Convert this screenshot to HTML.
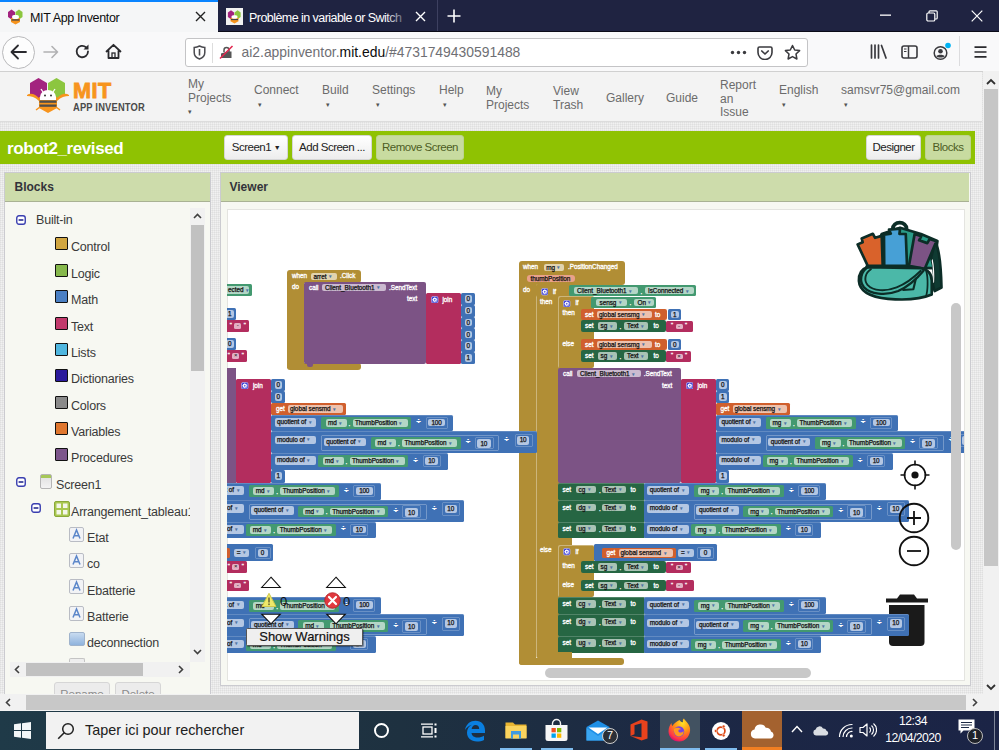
<!DOCTYPE html>
<html><head><meta charset="utf-8">
<style>
*{box-sizing:border-box;margin:0;padding:0}
html,body{width:999px;height:750px;overflow:hidden;background:#fff;font-family:"Liberation Sans",sans-serif}
.a{position:absolute}
#root{position:absolute;left:0;top:0;width:999px;height:750px;overflow:hidden;background:#ececec}
/* browser chrome */
#tabbar{left:0;top:0;width:999px;height:32px;background:#1f2341;border-bottom:1px solid #0b0b18}
#tab1{left:0;top:0;width:218px;height:33px;background:#f5f6f7;border-top:2px solid #0a84ff}
.tabt{font-size:12.500px;letter-spacing:-0.350px;color:#0c0c0d;top:10.500px;white-space:nowrap}
#navbar{left:0;top:32px;width:999px;height:40px;background:#f9f9fa;border-bottom:1px solid #d0d0d0}
#url{left:184.500px;top:5.500px;width:623px;height:29.500px;background:#fff;border:1px solid #c4c4c6;border-radius:3px}
/* app inventor */
#page{left:0;top:72px;width:983px;height:639px;background-color:#f1f1f1;background-image:linear-gradient(90deg,rgba(0,0,0,.04) 50%,rgba(0,0,0,0) 50%),linear-gradient(rgba(0,0,0,.04) 50%,rgba(0,0,0,0) 50%);background-size:2px 2px;overflow:hidden}
#topnav{left:0;top:0;width:982px;height:50px;background:#f3f3f3;border-bottom:1px solid #dcdcdc}
.nv{font-size:12px;color:#6b6b6b;line-height:13.5px;white-space:nowrap}
.nv i{font-style:normal;font-size:7px;display:block;line-height:9px;margin-top:2px;color:#555}
#green{left:0;top:59px;width:975px;height:33px;background:#8fc202}
.btn{height:25px;border-radius:3px;font-size:11.500px;letter-spacing:-0.500px;line-height:23px;text-align:center;white-space:nowrap;top:4px;color:#222;border:1px solid #d6d6d6;background:linear-gradient(#ffffff,#ededed)}
.btn.dis{background:#c8dba0;border-color:#bdd38f;color:#4d5d24}
.panel{background:#f7f8f2;border:1px solid #cbcbd0}
.phead{left:0;top:0;height:29px;background:#cddcab;border-bottom:1px solid #a9b294;font-weight:bold;font-size:12px;color:#33333a;line-height:29px;padding-left:10px}
.ti{font-size:12.500px;letter-spacing:-0.200px;color:#3a3a3a;white-space:nowrap;line-height:14px}
.sw{width:13px;height:13px;border:1.5px solid #111;border-radius:1px}

#wsc{left:227px;top:209px;width:737px;height:471px;overflow:hidden}
.b{position:absolute}
.t{position:absolute;white-space:nowrap;line-height:8px;letter-spacing:-0.050px;-webkit-text-stroke:0.300px #fff}
.d{position:absolute;white-space:nowrap;font-size:6.400px;color:#111;border-radius:2px;letter-spacing:-0.050px;-webkit-text-stroke:0.250px #111}
.d i{font-style:normal;font-size:4.600px;color:#4d74a6;-webkit-text-stroke:0.200px #4d74a6;margin-left:2.500px;position:relative;top:-0.500px}
.n{position:absolute;background:#b4c7e3;border-radius:2px;font-size:6.400px;color:#111;text-align:center;white-space:nowrap;letter-spacing:-0.200px;-webkit-text-stroke:0.250px #111}
.g{position:absolute;background:#3c3fd4;border:0.800px solid #c9cdf5;border-radius:1.500px}
.g:after{content:"";position:absolute;left:1.300px;top:1.300px;width:2.300px;height:2.300px;border-radius:50%;border:0.800px solid #fff}
/* taskbar */
#task{left:0;top:710px;width:999px;height:40px;background:linear-gradient(90deg,#1f3a48 0,#1e3140 40%,#1c2745 75%,#1b2446 100%)}
</style></head><body>
<div id="root">

<!-- ===== TAB BAR ===== -->
<div id="tabbar" class="a">
  <div id="tab1" class="a"></div>
  <svg class="a" style="left:7px;top:8px" width="17" height="17" viewBox="0 0 17 17"><polygon points="1,4 4.5,1.5 8,4 8,9 4.5,11.5 1,9" fill="#a3237f"/><polygon points="8.5,4 12,1.5 15.5,4 15.5,9 12,11.5 8.5,9" fill="#8cc63f"/><polygon points="4,10 13,10 13,14 8.5,16.5 4,14" fill="#f7941d"/><rect x="5" y="7" width="7" height="4" rx="2" fill="#fff"/><rect x="4.5" y="11.3" width="8" height="1.3" fill="#444"/></svg>
  <div class="a tabt" style="left:30px">MIT App Inventor</div>
  <svg class="a" style="left:195px;top:11px" width="11" height="11" viewBox="0 0 11 11"><path d="M1 1L10 10M10 1L1 10" stroke="#222" stroke-width="1.4" fill="none"/></svg>
  <div class="a" style="left:226px;top:8px;width:17px;height:17px;background:#f1f1f1"></div>
  <svg class="a" style="left:227px;top:9px" width="15" height="15" viewBox="0 0 17 17"><polygon points="1,4 4.5,1.5 8,4 8,9 4.5,11.5 1,9" fill="#a3237f"/><polygon points="8.5,4 12,1.5 15.5,4 15.5,9 12,11.5 8.5,9" fill="#8cc63f"/><polygon points="4,10 13,10 13,14 8.5,16.5 4,14" fill="#f7941d"/><rect x="5" y="7" width="7" height="4" rx="2" fill="#fff"/><rect x="4.5" y="11.3" width="8" height="1.3" fill="#444"/></svg>
  <div class="a tabt" style="left:249px;color:#fff;width:158px;overflow:hidden;letter-spacing:-0.550px">Problème in variable or Switch</div>
  <div class="a" style="left:385px;top:6px;width:22px;height:22px;background:linear-gradient(90deg,rgba(31,35,65,0),rgba(31,35,65,.85))"></div>
  <svg class="a" style="left:415px;top:11px" width="11" height="11" viewBox="0 0 11 11"><path d="M1 1L10 10M10 1L1 10" stroke="#fff" stroke-width="1.4" fill="none"/></svg>
  <div class="a" style="left:437px;top:0;width:1px;height:31px;background:#3d4060"></div>
  <svg class="a" style="left:447px;top:9px" width="14" height="14" viewBox="0 0 14 14"><path d="M7 0.5V13.5M0.5 7H13.5" stroke="#fff" stroke-width="1.6" fill="none"/></svg>
  <svg class="a" style="left:880px;top:14px" width="12" height="3"><rect width="11" height="1.3" y="0.5" fill="#fff"/></svg>
  <svg class="a" style="left:926px;top:10px" width="12" height="12" viewBox="0 0 12 12"><rect x="0.8" y="3" width="8" height="8" rx="1.3" fill="none" stroke="#fff" stroke-width="1.2"/><path d="M3 3V1.8a1 1 0 0 1 1-1H10.2a1 1 0 0 1 1 1V8a1 1 0 0 1-1 1H9" fill="none" stroke="#fff" stroke-width="1.2"/></svg>
  <svg class="a" style="left:971px;top:10px" width="12" height="12" viewBox="0 0 12 12"><path d="M0.7 0.7L11.3 11.3M11.3 0.7L0.7 11.3" stroke="#fff" stroke-width="1.2" fill="none"/></svg>
</div>

<!-- ===== NAV BAR ===== -->
<div id="navbar" class="a">
  <div class="a" style="left:2px;top:3.500px;width:33px;height:33px;border-radius:50%;border:1px solid #b9b9bb;background:#fdfdfd"></div>
  <svg class="a" style="left:10px;top:12px" width="17" height="16" viewBox="0 0 17 16"><path d="M16 8H2M8 1.5L1.5 8L8 14.5" fill="none" stroke="#2a2a2e" stroke-width="1.8" stroke-linecap="round" stroke-linejoin="round"/></svg>
  <svg class="a" style="left:43px;top:13px" width="16" height="14" viewBox="0 0 16 14"><path d="M1 7H14.5M9 1.5L14.5 7L9 12.5" fill="none" stroke="#b1b1b3" stroke-width="1.6" stroke-linecap="round" stroke-linejoin="round"/></svg>
  <svg class="a" style="left:74px;top:11px" width="17" height="17" viewBox="0 0 17 17"><path d="M14 8.5A5.7 5.7 0 1 1 12 4.2" fill="none" stroke="#2a2a2e" stroke-width="1.8" stroke-linecap="round"/><path d="M14.5 1.5V6.5H9.5Z" fill="#2a2a2e"/></svg>
  <svg class="a" style="left:105px;top:11px" width="17" height="17" viewBox="0 0 17 17"><path d="M1.5 8.5L8.5 1.8L15.5 8.5M3.5 7.5V15H13.5V7.5" fill="none" stroke="#2a2a2e" stroke-width="1.8" stroke-linecap="round" stroke-linejoin="round"/><rect x="7" y="10" width="3" height="5" fill="none" stroke="#2a2a2e" stroke-width="1.3"/></svg>
  <div id="url" class="a">
    <svg class="a" style="left:7px;top:6px" width="13" height="15" viewBox="0 0 13 15"><path d="M6.5 1C4.5 2 2.8 2.3 1.2 2.4V7.5C1.2 10.5 3.5 13 6.5 14C9.5 13 11.8 10.5 11.8 7.5V2.4C10.2 2.3 8.500 2 6.5 1Z" fill="none" stroke="#4a4a4f" stroke-width="1.5"/><path d="M6.5 4V10.500" stroke="#4a4a4f" stroke-width="1.6"/></svg>
    <div class="a" style="left:26px;top:4px;width:1px;height:20px;background:#ddd"></div>
    <svg class="a" style="left:33px;top:6px" width="15" height="15" viewBox="0 0 15 15"><path d="M2 13V8.5L8 6.500H12.500V13Z" fill="#555"/><path d="M5 7V5a2.500 2.500 0 0 1 5 0V7" fill="none" stroke="#555" stroke-width="1.500"/><path d="M1 13.500L13.500 1" stroke="#e22850" stroke-width="1.6"/></svg>
    <div class="a" style="left:56px;top:5px;font-size:13.9px;color:#6f6f74;white-space:nowrap;letter-spacing:0">ai2.appinventor.<span style="color:#0c0c0d">mit.edu</span>/#4731749430591488</div>
    <svg class="a" style="left:544px;top:11px" width="18" height="5" viewBox="0 0 18 5"><circle cx="2.500" cy="2.500" r="1.700" fill="#3a3a3e"/><circle cx="8.500" cy="2.500" r="1.700" fill="#3a3a3e"/><circle cx="14.500" cy="2.500" r="1.700" fill="#3a3a3e"/></svg>
    <svg class="a" style="left:571px;top:7px" width="16" height="14" viewBox="0 0 16 14"><path d="M2.500 1H13.500A1.500 1.500 0 0 1 15 2.500V6.500A7 7 0 0 1 1 6.500V2.500A1.500 1.500 0 0 1 2.500 1Z" fill="none" stroke="#3a3a3e" stroke-width="1.600"/><path d="M4.800 5L8 8L11.200 5" fill="none" stroke="#3a3a3e" stroke-width="1.700" stroke-linecap="round" stroke-linejoin="round"/></svg>
    <svg class="a" style="left:598px;top:5px" width="17" height="17" viewBox="0 0 17 17"><path d="M8.500 1.500L10.700 6L15.600 6.600L12 10L12.900 15L8.500 12.600L4.100 15L5 10L1.400 6.600L6.300 6Z" fill="none" stroke="#3a3a3e" stroke-width="1.500" stroke-linejoin="round"/></svg>
  </div>
  <svg class="a" style="left:870px;top:12px" width="18" height="15" viewBox="0 0 18 15"><path d="M1.500 1V14M5 1V14M8.500 1V14M11.500 1.500L16 14" stroke="#3a3a3e" stroke-width="1.700" fill="none" stroke-linecap="round"/></svg>
  <svg class="a" style="left:901px;top:13px" width="17" height="14" viewBox="0 0 17 14"><rect x="1" y="1" width="15" height="12" rx="2" fill="none" stroke="#3a3a3e" stroke-width="1.600"/><path d="M7.500 1V13" stroke="#3a3a3e" stroke-width="1.500"/><path d="M3 4H5.500M3 6.500H5.500" stroke="#3a3a3e" stroke-width="1"/></svg>
  <svg class="a" style="left:932px;top:10px" width="20" height="20" viewBox="0 0 20 20"><circle cx="8.500" cy="11" r="6.300" fill="none" stroke="#3a3a3e" stroke-width="1.500"/><circle cx="8.500" cy="9.300" r="2.300" fill="#3a3a3e"/><path d="M4.300 14.300C5.500 12.300 11.500 12.300 12.700 14.300C11.500 16 5.500 16 4.300 14.300Z" fill="#3a3a3e"/><circle cx="16" cy="3.500" r="2.800" fill="#00b3f4"/></svg>
  <div class="a" style="left:959px;top:4px;width:1px;height:30px;background:#dcdcde"></div>
  <svg class="a" style="left:974px;top:14px" width="13" height="12" viewBox="0 0 13 12"><path d="M0.500 1.200H12.500M0.500 6H12.500M0.500 10.800H12.500" stroke="#2a2a2e" stroke-width="1.700"/></svg>
</div>

<!-- ===== PAGE ===== -->
<div id="page" class="a">
  <div id="topnav" class="a">
    <!-- logo -->
    <svg class="a" style="left:26px;top:3px" width="46" height="40" viewBox="0 0 46 40">
      <polygon points="4,8 12.500,3 21,8 21,19 12.500,24 4,19" fill="#a3237f"/>
      <polygon points="22,8 30.500,3 39,8 39,19 30.500,24 22,19" fill="#8cc63f"/>
      <path d="M1 20C5 17 10 20 13 23L13 26C9 22 5 21 1 21Z" fill="#f7941d"/>
      <path d="M43 20C39 17 34 20 31 23L31 26C35 22 39 21 43 21Z" fill="#f7941d"/>
      <path d="M13 22H31V33L22 38L13 33Z" fill="#f7941d"/>
      <path d="M14 22A8 7 0 0 1 30 22V25H14Z" fill="#fff"/>
      <rect x="13.500" y="25.500" width="17" height="2.300" fill="#4d4d4d"/><rect x="13.500" y="29.500" width="17" height="2.300" fill="#4d4d4d"/>
      <circle cx="19" cy="20.500" r="1" fill="#333"/><circle cx="25" cy="20.500" r="1" fill="#333"/>
      <path d="M17 17L15 14M27 17L29 14" stroke="#fff" stroke-width="1.300"/>
      <path d="M10 35L14 32M34 35L30 32" stroke="#f7941d" stroke-width="1.500"/>
    </svg>
    <div class="a" style="left:73px;top:8px;font-size:22.500px;font-weight:bold;color:#f7941d;-webkit-text-stroke:0.900px #f7941d;letter-spacing:0.500px;line-height:22px;transform:scaleX(0.960);transform-origin:0 0">MIT</div>
    <div class="a" style="left:73px;top:30px;font-size:10.500px;font-weight:bold;color:#4a4a4a;letter-spacing:0.200px;line-height:11px;white-space:nowrap;transform:scaleX(0.890);transform-origin:0 0">APP INVENTOR</div>
    <div class="a nv" style="left:188px;top:6px">My<br>Projects<i>&#9662;</i></div>
    <div class="a nv" style="left:254px;top:12px">Connect<i style="margin-left:4px;margin-top:2.500px">&#9662;</i></div>
    <div class="a nv" style="left:322px;top:12px">Build<i style="margin-left:4px;margin-top:2.500px">&#9662;</i></div>
    <div class="a nv" style="left:372px;top:12px">Settings<i style="margin-left:4px;margin-top:2.500px">&#9662;</i></div>
    <div class="a nv" style="left:439px;top:12px">Help<i style="margin-left:4px;margin-top:2.500px">&#9662;</i></div>
    <div class="a nv" style="left:486px;top:13px">My<br>Projects</div>
    <div class="a nv" style="left:553px;top:13px">View<br>Trash</div>
    <div class="a nv" style="left:606px;top:20px">Gallery</div>
    <div class="a nv" style="left:666px;top:20px">Guide</div>
    <div class="a nv" style="left:720px;top:7px">Report<br>an<br>Issue</div>
    <div class="a nv" style="left:779px;top:12px">English<i style="margin-left:3px;margin-top:2.500px">&#9662;</i></div>
    <div class="a nv" style="left:841px;top:12px">samsvr75@gmail.com<i style="margin-left:3px;margin-top:2.500px">&#9662;</i></div>
  </div>
  <div id="green" class="a">
    <div class="a" style="left:7px;top:7.500px;font-size:17px;font-weight:bold;color:#fff;letter-spacing:-0.400px;line-height:20px;white-space:nowrap">robot2_revised</div>
    <div class="a btn" style="left:224px;width:64px">Screen1 <span style="font-size:7px;position:relative;top:-1px">&#9660;</span></div>
    <div class="a btn" style="left:292px;width:80px">Add Screen ...</div>
    <div class="a btn dis" style="left:376px;width:88px">Remove Screen</div>
    <div class="a btn" style="left:866px;width:55px">Designer</div>
    <div class="a btn dis" style="left:925px;width:46px">Blocks</div>
  </div>

  <!-- Blocks panel -->
  <div id="bp" class="a panel" style="left:3.500px;top:100px;width:207.500px;height:540px;overflow:hidden">
    <div class="a phead" style="width:206px">Blocks</div>
  </div>
  <!-- Viewer panel -->
  <div id="vp" class="a panel" style="left:220px;top:100px;width:751px;height:514px;border-width:1.500px">
    <div class="a phead" style="width:748px;padding-left:8.500px">Viewer</div>
    <div id="ws" class="a" style="left:5.500px;top:35.500px;width:738px;height:472px;background:#fff;border:1px solid #e4e4e0;overflow:hidden"></div>
  </div>

  <!-- bottom horizontal scrollbar -->
  <div class="a" style="left:0;top:624px;width:983px;height:17px;background:#f1f1f1"></div>
</div>

<!-- ===== TREE ===== -->
<div id="tree" class="a" style="left:0;top:0;width:983px;height:694px;overflow:hidden;pointer-events:none">
<svg class="a" style="left:16px;top:215px" width="10" height="10" viewBox="0 0 10 10"><rect x="0.750" y="0.750" width="8.500" height="8.500" rx="2.200" fill="#fff" stroke="#3a3fb0" stroke-width="1.400"/><rect x="2.600" y="4.200" width="4.800" height="1.600" fill="#2a2f90"/></svg>
<div class="a ti" style="left:36px;top:213px">Built-in</div>
<div class="a sw" style="left:55px;top:236.5px;background:#d1a640"></div>
<div class="a ti" style="left:71px;top:240px">Control</div>
<div class="a sw" style="left:55px;top:263.5px;background:#86b84c"></div>
<div class="a ti" style="left:71px;top:267px">Logic</div>
<div class="a sw" style="left:55px;top:289.5px;background:#4a7fc3"></div>
<div class="a ti" style="left:71px;top:293px">Math</div>
<div class="a sw" style="left:55px;top:316.5px;background:#c23a6c"></div>
<div class="a ti" style="left:71px;top:320px">Text</div>
<div class="a sw" style="left:55px;top:342.5px;background:#4fb6df"></div>
<div class="a ti" style="left:71px;top:346px">Lists</div>
<div class="a sw" style="left:55px;top:368.5px;background:#2b1a9c"></div>
<div class="a ti" style="left:71px;top:372px">Dictionaries</div>
<div class="a sw" style="left:55px;top:395.5px;background:#8a8a8a"></div>
<div class="a ti" style="left:71px;top:399px">Colors</div>
<div class="a sw" style="left:55px;top:421.5px;background:#e0772f"></div>
<div class="a ti" style="left:71px;top:425px">Variables</div>
<div class="a sw" style="left:55px;top:447.5px;background:#7d568c"></div>
<div class="a ti" style="left:71px;top:451px">Procedures</div>
<svg class="a" style="left:16px;top:477px" width="10" height="10" viewBox="0 0 10 10"><rect x="0.750" y="0.750" width="8.500" height="8.500" rx="2.200" fill="#fff" stroke="#3a3fb0" stroke-width="1.400"/><rect x="2.600" y="4.200" width="4.800" height="1.600" fill="#2a2f90"/></svg>
<div class="a" style="left:40px;top:474px;width:12px;height:15px;border:1px solid #b5b5b5;border-radius:2px;background:linear-gradient(#a6c858 0,#a6c858 3px,#e4e4e4 3px,#f3f3f3 100%)"></div>
<div class="a ti" style="left:56px;top:478px">Screen1</div>
<svg class="a" style="left:31px;top:503px" width="10" height="10" viewBox="0 0 10 10"><rect x="0.750" y="0.750" width="8.500" height="8.500" rx="2.200" fill="#fff" stroke="#3a3fb0" stroke-width="1.400"/><rect x="2.600" y="4.200" width="4.800" height="1.600" fill="#2a2f90"/></svg>
<svg class="a" style="left:54px;top:501px" width="16" height="16" viewBox="0 0 16 16"><rect x="0.500" y="0.500" width="15" height="15" rx="1.500" fill="#a9c750" stroke="#8aa83a"/><rect x="2.500" y="2.500" width="4.500" height="4.500" fill="#f4f6ea"/><rect x="9" y="2.500" width="4.500" height="4.500" fill="#f4f6ea"/><rect x="2.500" y="9" width="4.500" height="4.500" fill="#f4f6ea"/><rect x="9" y="9" width="4.500" height="4.500" fill="#f4f6ea"/></svg>
<div class="a ti" style="left:71px;top:505px">Arrangement_tableau1</div>
<svg class="a" style="left:69px;top:526.5px" width="15" height="15" viewBox="0 0 15 15"><rect x="0.500" y="0.500" width="14" height="14" rx="1.500" fill="#f2f3f6" stroke="#b9bcc4"/><path d="M4 11.500L7.500 3L11 11.500M5.300 8.700H9.700" fill="none" stroke="#5b86c9" stroke-width="1.500"/></svg>
<div class="a ti" style="left:87px;top:531px">Etat</div>
<svg class="a" style="left:69px;top:552.5px" width="15" height="15" viewBox="0 0 15 15"><rect x="0.500" y="0.500" width="14" height="14" rx="1.500" fill="#f2f3f6" stroke="#b9bcc4"/><path d="M4 11.500L7.500 3L11 11.500M5.300 8.700H9.700" fill="none" stroke="#5b86c9" stroke-width="1.500"/></svg>
<div class="a ti" style="left:87px;top:557px">co</div>
<svg class="a" style="left:69px;top:579.0px" width="15" height="15" viewBox="0 0 15 15"><rect x="0.500" y="0.500" width="14" height="14" rx="1.500" fill="#f2f3f6" stroke="#b9bcc4"/><path d="M4 11.500L7.500 3L11 11.500M5.300 8.700H9.700" fill="none" stroke="#5b86c9" stroke-width="1.500"/></svg>
<div class="a ti" style="left:87px;top:583.5px">Ebatterie</div>
<svg class="a" style="left:69px;top:605.5px" width="15" height="15" viewBox="0 0 15 15"><rect x="0.500" y="0.500" width="14" height="14" rx="1.500" fill="#f2f3f6" stroke="#b9bcc4"/><path d="M4 11.500L7.500 3L11 11.500M5.300 8.700H9.700" fill="none" stroke="#5b86c9" stroke-width="1.500"/></svg>
<div class="a ti" style="left:87px;top:610px">Batterie</div>
<div class="a" style="left:69px;top:632px;width:16px;height:14px;border:1px solid #9fb3cc;border-radius:2px;background:linear-gradient(#c8dbf0,#8fb3dd)"></div>
<div class="a ti" style="left:87px;top:636px">deconnection</div>
<div class="a" style="left:69px;top:658px;width:16px;height:6px;border:1px solid #c4c4c4;border-bottom:none;border-radius:2px 2px 0 0;background:#eee"></div>
<div class="a" style="left:190px;top:208px;width:15px;height:454px;background:#f1f1f1"></div>
<div class="a" style="left:191px;top:225px;width:13px;height:146px;background:#c1c1c1"></div>
<svg class="a" style="left:193px;top:213px" width="9" height="6" viewBox="0 0 9 6"><path d="M1 5L4.500 1.500L8 5" fill="none" stroke="#404040" stroke-width="1.600"/></svg>
<svg class="a" style="left:193px;top:649px" width="9" height="6" viewBox="0 0 9 6"><path d="M1 1L4.500 4.500L8 1" fill="none" stroke="#404040" stroke-width="1.600"/></svg>
<div class="a" style="left:10px;top:662px;width:180px;height:15px;background:#f1f1f1"></div>
<div class="a" style="left:26px;top:663px;width:117px;height:13px;background:#c1c1c1"></div>
<svg class="a" style="left:14px;top:665px" width="6" height="9" viewBox="0 0 6 9"><path d="M5 1L1.500 4.500L5 8" fill="none" stroke="#404040" stroke-width="1.600"/></svg>
<svg class="a" style="left:178px;top:665px" width="6" height="9" viewBox="0 0 6 9"><path d="M1 1L4.500 4.500L1 8" fill="none" stroke="#404040" stroke-width="1.600"/></svg>
<div class="a" style="left:54px;top:682px;width:56px;height:24px;border:1px solid #d6d6d6;border-radius:3px;background:#ececec;color:#8a8a8a;font-size:11.500px;text-align:center;line-height:22px">Rename</div>
<div class="a" style="left:115px;top:682px;width:46px;height:24px;border:1px solid #d6d6d6;border-radius:3px;background:#ececec;color:#8a8a8a;font-size:11.500px;text-align:center;line-height:22px">Delete</div>
</div>

<!-- ===== WORKSPACE ===== -->
<div id="wsc" class="a">
<!--WS-START-->
<!-- trash -->
<svg class="b" style="left:658px;top:383px" width="44" height="56" viewBox="0 0 44 56"><path d="M1 10.500V6.500H12L15 2.500H29L32 6.500H43V10.500Z" fill="#1a1a1a"/><path d="M4 13H39.500V50A4 4 0 0 1 35.500 54H8A4 4 0 0 1 4 50Z" fill="#1a1a1a"/></svg>
<div class="b" style="left:59.7px;top:61px;width:74px;height:13px;background:#b18e35;border-radius:3px;"></div>
<div class="b" style="left:59.7px;top:66px;width:17.3px;height:93px;background:#b18e35;border-radius:0px;"></div>
<div class="b" style="left:59.7px;top:154px;width:74px;height:7px;background:#b18e35;border-radius:3px;"></div>
<div class="t" style="left:65px;top:63px;color:#fff;font-size:6.4px;">when</div>
<div class="d" style="left:84px;top:63.5px;width:25.7px;height:7.5px;background:#e1d3af;line-height:7.5px;padding-left:2.5px">arret<i>&#9662;</i></div>
<div class="t" style="left:113px;top:63px;color:#fff;font-size:6.4px;">.Click</div>
<div class="t" style="left:65px;top:73.5px;color:#fff;font-size:6.4px;">do</div>
<div class="b" style="left:76.7px;top:73px;width:122.3px;height:81.7px;background:#7c5385;border-radius:2px;"></div>
<div class="b" style="left:80px;top:153px;width:6px;height:4.5px;background:#7c5385;border-radius:2px;"></div>
<div class="t" style="left:82px;top:74.5px;color:#fff;font-size:6.4px;">call</div>
<div class="d" style="left:95px;top:74.7px;width:64px;height:7.6px;background:#cbbad0;line-height:7.6px;padding-left:3px">Client_Bluetooth1<i>&#9662;</i></div>
<div class="t" style="left:162px;top:74.5px;color:#fff;font-size:6.4px;">.SendText</div>
<div class="t" style="left:180px;top:86px;color:#fff;font-size:6.4px;">text</div>
<div class="b" style="left:199px;top:84px;width:35px;height:70.7px;background:#b32d5e;border-radius:1.5px;"></div>
<svg class="b" style="left:204px;top:86.5px" width="7.5" height="7.5" viewBox="0 0 13 13"><rect x="0.800" y="0.800" width="11.400" height="11.400" rx="2.500" fill="#3b3fd6" stroke="#b9bdf3" stroke-width="1.200"/><circle cx="6.500" cy="6.500" r="2.600" fill="none" stroke="#fff" stroke-width="1.900"/><path d="M6.500 2V11M2 6.500H11M3.300 3.300L9.700 9.700M9.700 3.300L3.300 9.700" stroke="#fff" stroke-width="1.100"/><circle cx="6.500" cy="6.500" r="1.200" fill="#3b3fd6"/></svg>
<div class="t" style="left:215.5px;top:86.5px;color:#fff;font-size:6.4px;">join</div>
<div class="b" style="left:234px;top:84px;width:13.5px;height:11.8px;background:#3f71b5;border-radius:1.5px;"></div>
<div class="n" style="left:237.5px;top:86.2px;width:7.5px;height:7.4px;line-height:7.4px">0</div>
<div class="b" style="left:234px;top:95.8px;width:13.5px;height:11.8px;background:#3f71b5;border-radius:1.5px;"></div>
<div class="n" style="left:237.5px;top:98px;width:7.5px;height:7.4px;line-height:7.4px">0</div>
<div class="b" style="left:234px;top:107.6px;width:13.5px;height:11.8px;background:#3f71b5;border-radius:1.5px;"></div>
<div class="n" style="left:237.5px;top:109.8px;width:7.5px;height:7.4px;line-height:7.4px">0</div>
<div class="b" style="left:234px;top:119.4px;width:13.5px;height:11.8px;background:#3f71b5;border-radius:1.5px;"></div>
<div class="n" style="left:237.5px;top:121.6px;width:7.5px;height:7.4px;line-height:7.4px">0</div>
<div class="b" style="left:234px;top:131.2px;width:13.5px;height:11.8px;background:#3f71b5;border-radius:1.5px;"></div>
<div class="n" style="left:237.5px;top:133.4px;width:7.5px;height:7.4px;line-height:7.4px">0</div>
<div class="b" style="left:234px;top:143px;width:13.5px;height:11.8px;background:#3f71b5;border-radius:1.5px;"></div>
<div class="n" style="left:237.5px;top:145.2px;width:7.5px;height:7.4px;line-height:7.4px">1</div>
<div class="b" style="left:291.7px;top:52px;width:106.3px;height:24px;background:#b18e35;border-radius:3px;"></div>
<div class="b" style="left:291.7px;top:61px;width:17.3px;height:390px;background:#b18e35;border-radius:0px;"></div>
<div class="b" style="left:291.7px;top:448.5px;width:105.8px;height:7px;background:#b18e35;border-radius:3px;"></div>
<div class="b" style="left:291.7px;top:446px;width:8px;height:9.5px;background:#b18e35;border-radius:0 0 0 3px"></div>
<div class="t" style="left:296px;top:54px;color:#fff;font-size:6.4px;">when</div>
<div class="d" style="left:316.7px;top:54.5px;width:20.8px;height:7.5px;background:#e1d3af;line-height:7.5px;padding-left:2.5px">mg<i>&#9662;</i></div>
<div class="t" style="left:341px;top:54px;color:#fff;font-size:6.4px;">.PositionChanged</div>
<div class="d" style="left:300px;top:65.5px;width:47.5px;height:7.5px;background:#e9a18a;line-height:7.5px;padding-left:3.5px;border-radius:3px">thumbPosition</div>
<div class="t" style="left:296px;top:77px;color:#fff;font-size:6.4px;">do</div>
<div class="b" style="left:308.5px;top:75px;width:35.5px;height:374px;background:#b18e35;border-radius:2px;box-shadow:inset 1px 1px 0 rgba(255,255,255,.35)"></div>
<div class="b" style="left:308.5px;top:75px;width:36.5px;height:13px;background:#b18e35;border-radius:2px;"></div>
<svg class="b" style="left:313.7px;top:79px" width="7.5" height="7.5" viewBox="0 0 13 13"><rect x="0.800" y="0.800" width="11.400" height="11.400" rx="2.500" fill="#3b3fd6" stroke="#b9bdf3" stroke-width="1.200"/><circle cx="6.500" cy="6.500" r="2.600" fill="none" stroke="#fff" stroke-width="1.900"/><path d="M6.500 2V11M2 6.500H11M3.300 3.300L9.700 9.700M9.700 3.300L3.300 9.700" stroke="#fff" stroke-width="1.100"/><circle cx="6.500" cy="6.500" r="1.200" fill="#3b3fd6"/></svg>
<div class="t" style="left:326px;top:78.5px;color:#fff;font-size:6.4px;">if</div>
<div class="t" style="left:313px;top:88.7px;color:#fff;font-size:6.4px;">then</div>
<div class="t" style="left:313px;top:336.5px;color:#fff;font-size:6.4px;">else</div>
<div class="b" style="left:342px;top:76px;width:127px;height:11px;background:#439970;border-radius:1.5px;"></div>
<div class="d" style="left:347px;top:78px;width:64px;height:7.3px;background:#b4d6c6;line-height:7.3px;padding-left:3px">Client_Bluetooth1<i>&#9662;</i></div>
<div class="t" style="left:413.5px;top:78.5px;color:#fff;font-size:6.4px;">.</div>
<div class="d" style="left:418px;top:78px;width:48.7px;height:7.3px;background:#b4d6c6;line-height:7.3px;padding-left:3px">IsConnected<i>&#9662;</i></div>
<div class="b" style="left:331px;top:87px;width:36px;height:72px;background:#b18e35;border-radius:2px;box-shadow:inset 1px 1px 0 rgba(255,255,255,.35)"></div>
<svg class="b" style="left:336px;top:90.5px" width="7.5" height="7.5" viewBox="0 0 13 13"><rect x="0.800" y="0.800" width="11.400" height="11.400" rx="2.500" fill="#3b3fd6" stroke="#b9bdf3" stroke-width="1.200"/><circle cx="6.500" cy="6.500" r="2.600" fill="none" stroke="#fff" stroke-width="1.900"/><path d="M6.500 2V11M2 6.500H11M3.300 3.300L9.700 9.700M9.700 3.300L3.300 9.700" stroke="#fff" stroke-width="1.100"/><circle cx="6.500" cy="6.500" r="1.200" fill="#3b3fd6"/></svg>
<div class="t" style="left:348.5px;top:90px;color:#fff;font-size:6.4px;">if</div>
<div class="b" style="left:364px;top:88px;width:65px;height:10.7px;background:#439970;border-radius:1.5px;"></div>
<div class="d" style="left:368.5px;top:89.8px;width:31.5px;height:7.2px;background:#b4d6c6;line-height:7.2px;padding-left:4px">sensg<i>&#9662;</i></div>
<div class="t" style="left:402.5px;top:90px;color:#fff;font-size:6.4px;">.</div>
<div class="d" style="left:406.5px;top:89.8px;width:20px;height:7.2px;background:#b4d6c6;line-height:7.2px;padding-left:4px">On<i>&#9662;</i></div>
<div class="t" style="left:335.5px;top:100px;color:#fff;font-size:6.4px;">then</div>
<div class="t" style="left:335.5px;top:130.7px;color:#fff;font-size:6.4px;">else</div>
<div class="b" style="left:353.7px;top:99.7px;width:86.8px;height:11.5px;background:#d05f2d;border-radius:2px;"></div>
<div class="t" style="left:358px;top:101.7px;color:#fff;font-size:6.4px;">set</div>
<div class="d" style="left:370px;top:101.7px;width:54.5px;height:7.5px;background:#edc2ae;line-height:7.5px;padding-left:2px">global sensmg<i>&#9662;</i></div>
<div class="t" style="left:428px;top:101.7px;color:#fff;font-size:6.4px;">to</div>
<div class="b" style="left:440.5px;top:99.7px;width:13.5px;height:11.5px;background:#3f71b5;border-radius:1.5px;"></div>
<div class="n" style="left:444px;top:101.9px;width:7.5px;height:7.1px;line-height:7.1px">1</div>
<div class="b" style="left:353.7px;top:111px;width:85.8px;height:11.7px;background:#266643;border-radius:2px;"></div>
<div class="t" style="left:358px;top:113px;color:#fff;font-size:6.4px;">set</div>
<div class="d" style="left:370.5px;top:113px;width:19.5px;height:7.5px;background:#a9c3b5;line-height:7.5px;padding-left:3px">sg<i>&#9662;</i></div>
<div class="t" style="left:392.5px;top:114px;color:#fff;font-size:6.4px;">.</div>
<div class="d" style="left:397px;top:113px;width:23.5px;height:7.5px;background:#a9c3b5;line-height:7.5px;padding-left:3px">Text<i>&#9662;</i></div>
<div class="t" style="left:426.5px;top:113px;color:#fff;font-size:6.4px;">to</div>
<div class="b" style="left:439px;top:111.5px;width:27px;height:11.2px;background:#b32d5e;border-radius:1.5px;"></div>
<div class="t" style="left:444px;top:112.1px;color:#fff;font-size:6px;">&quot;</div>
<div class="b" style="left:448.5px;top:114.5px;width:7px;height:5.2px;background:#e3b0c3;border-radius:1.5px;color:#111;font-size:6px;line-height:4.7px;text-align:center">-</div>
<div class="t" style="left:458px;top:112.1px;color:#fff;font-size:6px;">&quot;</div>
<div class="b" style="left:353.7px;top:129.7px;width:86.8px;height:11.5px;background:#d05f2d;border-radius:2px;"></div>
<div class="t" style="left:358px;top:131.7px;color:#fff;font-size:6.4px;">set</div>
<div class="d" style="left:370px;top:131.7px;width:54.5px;height:7.5px;background:#edc2ae;line-height:7.5px;padding-left:2px">global sensmg<i>&#9662;</i></div>
<div class="t" style="left:428px;top:131.7px;color:#fff;font-size:6.4px;">to</div>
<div class="b" style="left:440.5px;top:129.7px;width:13.5px;height:11.5px;background:#3f71b5;border-radius:1.5px;"></div>
<div class="n" style="left:444px;top:131.9px;width:7.5px;height:7.1px;line-height:7.1px">0</div>
<div class="b" style="left:353.7px;top:141px;width:85.8px;height:11.7px;background:#266643;border-radius:2px;"></div>
<div class="t" style="left:358px;top:143px;color:#fff;font-size:6.4px;">set</div>
<div class="d" style="left:370.5px;top:143px;width:19.5px;height:7.5px;background:#a9c3b5;line-height:7.5px;padding-left:3px">sg<i>&#9662;</i></div>
<div class="t" style="left:392.5px;top:144px;color:#fff;font-size:6.4px;">.</div>
<div class="d" style="left:397px;top:143px;width:23.5px;height:7.5px;background:#a9c3b5;line-height:7.5px;padding-left:3px">Text<i>&#9662;</i></div>
<div class="t" style="left:426.5px;top:143px;color:#fff;font-size:6.4px;">to</div>
<div class="b" style="left:439px;top:141.5px;width:25px;height:11.2px;background:#b32d5e;border-radius:1.5px;"></div>
<div class="t" style="left:444px;top:142.1px;color:#fff;font-size:6px;">&quot;</div>
<div class="b" style="left:448.5px;top:144.5px;width:7px;height:5.2px;background:#e3b0c3;border-radius:1.5px;color:#111;font-size:6px;line-height:4.7px;text-align:center">&#215;</div>
<div class="t" style="left:458px;top:142.1px;color:#fff;font-size:6px;">&quot;</div>
<div class="b" style="left:353.7px;top:122.7px;width:13.3px;height:7px;background:#b18e35;border-radius:0px;"></div>
<div class="b" style="left:331px;top:159px;width:122.5px;height:114.5px;background:#7c5385;border-radius:2px;"></div>
<div class="t" style="left:336px;top:160.7px;color:#fff;font-size:6.4px;">call</div>
<div class="d" style="left:350px;top:161.3px;width:63.5px;height:7.2px;background:#cbbad0;line-height:7.2px;padding-left:3px">Client_Bluetooth1<i>&#9662;</i></div>
<div class="t" style="left:416.7px;top:160.7px;color:#fff;font-size:6.4px;">.SendText</div>
<div class="t" style="left:435px;top:172.5px;color:#fff;font-size:6.4px;">text</div>
<div class="b" style="left:453.5px;top:170px;width:35px;height:103.5px;background:#b32d5e;border-radius:1.5px;"></div>
<svg class="b" style="left:458.5px;top:172.5px" width="7.5" height="7.5" viewBox="0 0 13 13"><rect x="0.800" y="0.800" width="11.400" height="11.400" rx="2.500" fill="#3b3fd6" stroke="#b9bdf3" stroke-width="1.200"/><circle cx="6.500" cy="6.500" r="2.600" fill="none" stroke="#fff" stroke-width="1.900"/><path d="M6.500 2V11M2 6.500H11M3.300 3.300L9.700 9.700M9.700 3.300L3.300 9.700" stroke="#fff" stroke-width="1.100"/><circle cx="6.500" cy="6.500" r="1.200" fill="#3b3fd6"/></svg>
<div class="t" style="left:470.5px;top:172.5px;color:#fff;font-size:6.4px;">join</div>
<div class="b" style="left:488.5px;top:170px;width:13.5px;height:12px;background:#3f71b5;border-radius:1.5px;"></div>
<div class="n" style="left:492px;top:172.2px;width:7.5px;height:7.6px;line-height:7.6px">0</div>
<div class="b" style="left:488.5px;top:182px;width:13.5px;height:12px;background:#3f71b5;border-radius:1.5px;"></div>
<div class="n" style="left:492px;top:184.2px;width:7.5px;height:7.6px;line-height:7.6px">1</div>
<div class="b" style="left:488.5px;top:194px;width:74.5px;height:11.5px;background:#d05f2d;border-radius:1.5px;"></div>
<div class="t" style="left:493.5px;top:196px;color:#fff;font-size:6.4px;">get</div>
<div class="d" style="left:505.5px;top:196px;width:54.5px;height:7.5px;background:#edc2ae;line-height:7.5px;padding-left:2px">global sensmg<i>&#9662;</i></div>
<div class="b" style="left:488.5px;top:205.5px;width:182px;height:16.5px;background:#3f71b5;border-radius:1.5px;box-shadow:inset 0 1px 0 rgba(255,255,255,.18)"></div>
<div class="d" style="left:492px;top:209px;width:41.5px;height:8.5px;background:#b4c7e3;line-height:8.5px;padding-left:2.5px">quotient of<i>&#9662;</i></div>
<div class="b" style="left:538.5px;top:208px;width:90px;height:12px;background:#439970;border-radius:1.5px;"></div>
<div class="d" style="left:543px;top:210px;width:21px;height:8px;background:#b4d6c6;line-height:8px;padding-left:2.5px">mg<i>&#9662;</i></div>
<div class="t" style="left:566px;top:211px;color:#fff;font-size:6.4px;">.</div>
<div class="d" style="left:570px;top:210px;width:55px;height:8px;background:#b4d6c6;line-height:8px;padding-left:2.5px">ThumbPosition<i>&#9662;</i></div>
<div class="t" style="left:634px;top:209.2px;color:#fff;font-size:7.5px;font-weight:bold">&#247;</div>
<div class="b" style="left:643px;top:207.5px;width:22px;height:12px;border:1px solid rgba(255,255,255,.22);border-radius:1.5px"></div>
<div class="n" style="left:645.5px;top:209.5px;width:17px;height:7.5px;line-height:7.5px">100</div>
<div class="b" style="left:488.5px;top:222px;width:265.7px;height:21.5px;background:#3f71b5;border-radius:1.5px;box-shadow:inset 0 1px 0 rgba(255,255,255,.18)"></div>
<div class="d" style="left:492px;top:226.5px;width:41.5px;height:8.5px;background:#b4c7e3;line-height:8.5px;padding-left:2.5px">modulo of<i>&#9662;</i></div>
<div class="b" style="left:538.5px;top:226px;width:178px;height:16px;border:1px solid rgba(255,255,255,.28);border-radius:1.5px"></div>
<div class="d" style="left:541.2px;top:228.5px;width:42.3px;height:8.5px;background:#b4c7e3;line-height:8.5px;padding-left:2.5px">quotient of<i>&#9662;</i></div>
<div class="b" style="left:588px;top:228px;width:90px;height:11.5px;background:#439970;border-radius:1.5px;"></div>
<div class="d" style="left:592.5px;top:230px;width:21px;height:7.5px;background:#b4d6c6;line-height:7.5px;padding-left:2.5px">mg<i>&#9662;</i></div>
<div class="t" style="left:615.5px;top:230.8px;color:#fff;font-size:6.4px;">.</div>
<div class="d" style="left:619.5px;top:230px;width:55px;height:7.5px;background:#b4d6c6;line-height:7.5px;padding-left:2.5px">ThumbPosition<i>&#9662;</i></div>
<div class="t" style="left:683.5px;top:229.2px;color:#fff;font-size:7.5px;font-weight:bold">&#247;</div>
<div class="b" style="left:692px;top:227.5px;width:19px;height:12.5px;border:1px solid rgba(255,255,255,.22);border-radius:1.5px"></div>
<div class="n" style="left:694.5px;top:230px;width:13.5px;height:9px;line-height:9px">10</div>
<div class="t" style="left:722px;top:226.8px;color:#fff;font-size:7.5px;font-weight:bold">&#247;</div>
<div class="b" style="left:732px;top:224.5px;width:18px;height:13.5px;border:1px solid rgba(255,255,255,.22);border-radius:1.5px"></div>
<div class="n" style="left:734.5px;top:227px;width:12px;height:8.5px;line-height:8.5px">10</div>
<div class="b" style="left:488.5px;top:243.5px;width:177px;height:17px;background:#3f71b5;border-radius:1.5px;box-shadow:inset 0 1px 0 rgba(255,255,255,.18)"></div>
<div class="d" style="left:492px;top:247px;width:41.5px;height:8.5px;background:#b4c7e3;line-height:8.5px;padding-left:2.5px">modulo of<i>&#9662;</i></div>
<div class="b" style="left:535.5px;top:246px;width:90px;height:12px;background:#439970;border-radius:1.5px;"></div>
<div class="d" style="left:540px;top:248px;width:21px;height:8px;background:#b4d6c6;line-height:8px;padding-left:2.5px">mg<i>&#9662;</i></div>
<div class="t" style="left:563px;top:249px;color:#fff;font-size:6.4px;">.</div>
<div class="d" style="left:567px;top:248px;width:55px;height:8px;background:#b4d6c6;line-height:8px;padding-left:2.5px">ThumbPosition<i>&#9662;</i></div>
<div class="t" style="left:631px;top:247.5px;color:#fff;font-size:7.5px;font-weight:bold">&#247;</div>
<div class="b" style="left:640px;top:245.5px;width:18px;height:12.5px;border:1px solid rgba(255,255,255,.22);border-radius:1.5px"></div>
<div class="n" style="left:642.5px;top:247.5px;width:13px;height:8px;line-height:8px">10</div>
<div class="b" style="left:488.5px;top:261px;width:13.5px;height:12.5px;background:#3f71b5;border-radius:1.5px;"></div>
<div class="n" style="left:492px;top:263.2px;width:7.5px;height:8.1px;line-height:8.1px">1</div>
<div class="b" style="left:331px;top:273.5px;width:86.7px;height:17px;background:#266643;border-radius:1.5px;box-shadow:inset 0 1px 0 rgba(255,255,255,.2)"></div>
<div class="t" style="left:335.5px;top:276.5px;color:#fff;font-size:6.4px;">set</div>
<div class="d" style="left:349px;top:276.5px;width:20px;height:7.5px;background:#a9c3b5;line-height:7.5px;padding-left:2.5px">cg<i>&#9662;</i></div>
<div class="t" style="left:372px;top:277.5px;color:#fff;font-size:6.4px;">.</div>
<div class="d" style="left:375px;top:276.5px;width:24px;height:7.5px;background:#a9c3b5;line-height:7.5px;padding-left:2.5px">Text<i>&#9662;</i></div>
<div class="t" style="left:403.5px;top:276.5px;color:#fff;font-size:6.4px;">to</div>
<div class="b" style="left:331px;top:290.5px;width:86.7px;height:22px;background:#266643;border-radius:1.5px;box-shadow:inset 0 1px 0 rgba(255,255,255,.2)"></div>
<div class="t" style="left:335.5px;top:294.5px;color:#fff;font-size:6.4px;">set</div>
<div class="d" style="left:349px;top:294.5px;width:20px;height:7.5px;background:#a9c3b5;line-height:7.5px;padding-left:2.5px">dg<i>&#9662;</i></div>
<div class="t" style="left:372px;top:295.5px;color:#fff;font-size:6.4px;">.</div>
<div class="d" style="left:375px;top:294.5px;width:24px;height:7.5px;background:#a9c3b5;line-height:7.5px;padding-left:2.5px">Text<i>&#9662;</i></div>
<div class="t" style="left:403.5px;top:294.5px;color:#fff;font-size:6.4px;">to</div>
<div class="b" style="left:331px;top:312.5px;width:86.7px;height:16.5px;background:#266643;border-radius:1.5px;box-shadow:inset 0 1px 0 rgba(255,255,255,.2)"></div>
<div class="t" style="left:335.5px;top:315.5px;color:#fff;font-size:6.4px;">set</div>
<div class="d" style="left:349px;top:315.5px;width:20px;height:7.5px;background:#a9c3b5;line-height:7.5px;padding-left:2.5px">ug<i>&#9662;</i></div>
<div class="t" style="left:372px;top:316.5px;color:#fff;font-size:6.4px;">.</div>
<div class="d" style="left:375px;top:315.5px;width:24px;height:7.5px;background:#a9c3b5;line-height:7.5px;padding-left:2.5px">Text<i>&#9662;</i></div>
<div class="t" style="left:403.5px;top:315.5px;color:#fff;font-size:6.4px;">to</div>
<div class="b" style="left:416.7px;top:273.5px;width:182px;height:17px;background:#3f71b5;border-radius:1.5px;box-shadow:inset 0 1px 0 rgba(255,255,255,.18)"></div>
<div class="d" style="left:420.2px;top:277px;width:41.5px;height:8.5px;background:#b4c7e3;line-height:8.5px;padding-left:2.5px">quotient of<i>&#9662;</i></div>
<div class="b" style="left:466.7px;top:276px;width:90px;height:12px;background:#439970;border-radius:1.5px;"></div>
<div class="d" style="left:471.2px;top:278px;width:21px;height:8px;background:#b4d6c6;line-height:8px;padding-left:2.5px">mg<i>&#9662;</i></div>
<div class="t" style="left:494.2px;top:279px;color:#fff;font-size:6.4px;">.</div>
<div class="d" style="left:498.2px;top:278px;width:55px;height:8px;background:#b4d6c6;line-height:8px;padding-left:2.5px">ThumbPosition<i>&#9662;</i></div>
<div class="t" style="left:562.2px;top:277.5px;color:#fff;font-size:7.5px;font-weight:bold">&#247;</div>
<div class="b" style="left:571.2px;top:275.5px;width:22px;height:12.5px;border:1px solid rgba(255,255,255,.22);border-radius:1.5px"></div>
<div class="n" style="left:573.7px;top:277.5px;width:17px;height:8px;line-height:8px">100</div>
<div class="b" style="left:416.7px;top:290.5px;width:265.7px;height:22px;background:#3f71b5;border-radius:1.5px;box-shadow:inset 0 1px 0 rgba(255,255,255,.18)"></div>
<div class="d" style="left:420.2px;top:295px;width:41.5px;height:8.5px;background:#b4c7e3;line-height:8.5px;padding-left:2.5px">modulo of<i>&#9662;</i></div>
<div class="b" style="left:466.7px;top:294.5px;width:178px;height:16.5px;border:1px solid rgba(255,255,255,.28);border-radius:1.5px"></div>
<div class="d" style="left:469.4px;top:297px;width:42.3px;height:8.5px;background:#b4c7e3;line-height:8.5px;padding-left:2.5px">quotient of<i>&#9662;</i></div>
<div class="b" style="left:516.2px;top:296.5px;width:90px;height:11.5px;background:#439970;border-radius:1.5px;"></div>
<div class="d" style="left:520.7px;top:298.5px;width:21px;height:7.5px;background:#b4d6c6;line-height:7.5px;padding-left:2.5px">mg<i>&#9662;</i></div>
<div class="t" style="left:543.7px;top:299.2px;color:#fff;font-size:6.4px;">.</div>
<div class="d" style="left:547.7px;top:298.5px;width:55px;height:7.5px;background:#b4d6c6;line-height:7.5px;padding-left:2.5px">ThumbPosition<i>&#9662;</i></div>
<div class="t" style="left:611.7px;top:298px;color:#fff;font-size:7.5px;font-weight:bold">&#247;</div>
<div class="b" style="left:620.2px;top:296px;width:19px;height:13px;border:1px solid rgba(255,255,255,.22);border-radius:1.5px"></div>
<div class="n" style="left:622.7px;top:298.5px;width:13.5px;height:9px;line-height:9px">10</div>
<div class="t" style="left:650.2px;top:295.5px;color:#fff;font-size:7.5px;font-weight:bold">&#247;</div>
<div class="b" style="left:660.2px;top:293px;width:18px;height:14px;border:1px solid rgba(255,255,255,.22);border-radius:1.5px"></div>
<div class="n" style="left:662.7px;top:295.5px;width:12px;height:8.5px;line-height:8.5px">10</div>
<div class="b" style="left:416.7px;top:312.5px;width:177px;height:16.5px;background:#3f71b5;border-radius:1.5px;box-shadow:inset 0 1px 0 rgba(255,255,255,.18)"></div>
<div class="d" style="left:420.2px;top:316px;width:41.5px;height:8.5px;background:#b4c7e3;line-height:8.5px;padding-left:2.5px">modulo of<i>&#9662;</i></div>
<div class="b" style="left:463.7px;top:315px;width:90px;height:12px;background:#439970;border-radius:1.5px;"></div>
<div class="d" style="left:468.2px;top:317px;width:21px;height:8px;background:#b4d6c6;line-height:8px;padding-left:2.5px">mg<i>&#9662;</i></div>
<div class="t" style="left:491.2px;top:318px;color:#fff;font-size:6.4px;">.</div>
<div class="d" style="left:495.2px;top:317px;width:55px;height:8px;background:#b4d6c6;line-height:8px;padding-left:2.5px">ThumbPosition<i>&#9662;</i></div>
<div class="t" style="left:559.2px;top:316.2px;color:#fff;font-size:7.5px;font-weight:bold">&#247;</div>
<div class="b" style="left:568.2px;top:314.5px;width:18px;height:12px;border:1px solid rgba(255,255,255,.22);border-radius:1.5px"></div>
<div class="n" style="left:570.7px;top:316.5px;width:13px;height:7.5px;line-height:7.5px">10</div>
<div class="b" style="left:331px;top:328.5px;width:14px;height:7.5px;background:#b18e35;border-radius:0px;"></div>
<div class="b" style="left:331px;top:335.5px;width:36px;height:52.5px;background:#b18e35;border-radius:2px;box-shadow:inset 1px 1px 0 rgba(255,255,255,.35)"></div>
<svg class="b" style="left:336px;top:339px" width="7.5" height="7.5" viewBox="0 0 13 13"><rect x="0.800" y="0.800" width="11.400" height="11.400" rx="2.500" fill="#3b3fd6" stroke="#b9bdf3" stroke-width="1.200"/><circle cx="6.500" cy="6.500" r="2.600" fill="none" stroke="#fff" stroke-width="1.900"/><path d="M6.500 2V11M2 6.500H11M3.300 3.300L9.700 9.700M9.700 3.300L3.300 9.700" stroke="#fff" stroke-width="1.100"/><circle cx="6.500" cy="6.500" r="1.200" fill="#3b3fd6"/></svg>
<div class="t" style="left:348.5px;top:338.5px;color:#fff;font-size:6.4px;">if</div>
<div class="b" style="left:366.7px;top:335px;width:123.8px;height:16.7px;background:#3f71b5;border-radius:1.5px;"></div>
<div class="b" style="left:374.7px;top:338.5px;width:74px;height:10.5px;background:#d05f2d;border-radius:1.5px;"></div>
<div class="t" style="left:379.5px;top:340px;color:#fff;font-size:6.4px;">get</div>
<div class="d" style="left:391.5px;top:340px;width:54px;height:7.5px;background:#edc2ae;line-height:7.5px;padding-left:2px">global sensmd<i>&#9662;</i></div>
<div class="d" style="left:451px;top:339.5px;width:15.7px;height:8.5px;background:#b4c7e3;line-height:8.5px;padding-left:3px">=<i>&#9662;</i></div>
<div class="b" style="left:470px;top:337.5px;width:17px;height:12px;border:1px solid rgba(255,255,255,.22);border-radius:1.5px"></div>
<div class="n" style="left:473px;top:339.5px;width:11px;height:8.5px;line-height:8.5px">0</div>
<div class="t" style="left:335.5px;top:353px;color:#fff;font-size:6.4px;">then</div>
<div class="t" style="left:335.5px;top:371.5px;color:#fff;font-size:6.4px;">else</div>
<div class="b" style="left:353.7px;top:352px;width:85.8px;height:11.7px;background:#266643;border-radius:2px;"></div>
<div class="t" style="left:358px;top:354px;color:#fff;font-size:6.4px;">set</div>
<div class="d" style="left:370.5px;top:354px;width:19.5px;height:7.5px;background:#a9c3b5;line-height:7.5px;padding-left:3px">sg<i>&#9662;</i></div>
<div class="t" style="left:392.5px;top:355px;color:#fff;font-size:6.4px;">.</div>
<div class="d" style="left:397px;top:354px;width:23.5px;height:7.5px;background:#a9c3b5;line-height:7.5px;padding-left:3px">Text<i>&#9662;</i></div>
<div class="t" style="left:426.5px;top:354px;color:#fff;font-size:6.4px;">to</div>
<div class="b" style="left:439px;top:352.5px;width:25px;height:11.2px;background:#b32d5e;border-radius:1.5px;"></div>
<div class="t" style="left:444px;top:353.1px;color:#fff;font-size:6px;">&quot;</div>
<div class="b" style="left:448.5px;top:355.5px;width:7px;height:5.2px;background:#e3b0c3;border-radius:1.5px;color:#111;font-size:6px;line-height:4.7px;text-align:center">&#215;</div>
<div class="t" style="left:458px;top:353.1px;color:#fff;font-size:6px;">&quot;</div>
<div class="b" style="left:353.7px;top:370.5px;width:85.8px;height:11.7px;background:#266643;border-radius:2px;"></div>
<div class="t" style="left:358px;top:372.5px;color:#fff;font-size:6.4px;">set</div>
<div class="d" style="left:370.5px;top:372.5px;width:19.5px;height:7.5px;background:#a9c3b5;line-height:7.5px;padding-left:3px">sg<i>&#9662;</i></div>
<div class="t" style="left:392.5px;top:373.5px;color:#fff;font-size:6.4px;">.</div>
<div class="d" style="left:397px;top:372.5px;width:23.5px;height:7.5px;background:#a9c3b5;line-height:7.5px;padding-left:3px">Text<i>&#9662;</i></div>
<div class="t" style="left:426.5px;top:372.5px;color:#fff;font-size:6.4px;">to</div>
<div class="b" style="left:439px;top:371px;width:27.5px;height:11.2px;background:#b32d5e;border-radius:1.5px;"></div>
<div class="t" style="left:444px;top:371.6px;color:#fff;font-size:6px;">&quot;</div>
<div class="b" style="left:448.5px;top:374px;width:7px;height:5.2px;background:#e3b0c3;border-radius:1.5px;color:#111;font-size:6px;line-height:4.7px;text-align:center">-</div>
<div class="t" style="left:458px;top:371.6px;color:#fff;font-size:6px;">&quot;</div>
<div class="b" style="left:331px;top:388px;width:86.7px;height:17px;background:#266643;border-radius:1.5px;box-shadow:inset 0 1px 0 rgba(255,255,255,.2)"></div>
<div class="t" style="left:335.5px;top:391px;color:#fff;font-size:6.4px;">set</div>
<div class="d" style="left:349px;top:391px;width:20px;height:7.5px;background:#a9c3b5;line-height:7.5px;padding-left:2.5px">cg<i>&#9662;</i></div>
<div class="t" style="left:372px;top:392px;color:#fff;font-size:6.4px;">.</div>
<div class="d" style="left:375px;top:391px;width:24px;height:7.5px;background:#a9c3b5;line-height:7.5px;padding-left:2.5px">Text<i>&#9662;</i></div>
<div class="t" style="left:403.5px;top:391px;color:#fff;font-size:6.4px;">to</div>
<div class="b" style="left:331px;top:405px;width:86.7px;height:22px;background:#266643;border-radius:1.5px;box-shadow:inset 0 1px 0 rgba(255,255,255,.2)"></div>
<div class="t" style="left:335.5px;top:409px;color:#fff;font-size:6.4px;">set</div>
<div class="d" style="left:349px;top:409px;width:20px;height:7.5px;background:#a9c3b5;line-height:7.5px;padding-left:2.5px">dg<i>&#9662;</i></div>
<div class="t" style="left:372px;top:410px;color:#fff;font-size:6.4px;">.</div>
<div class="d" style="left:375px;top:409px;width:24px;height:7.5px;background:#a9c3b5;line-height:7.5px;padding-left:2.5px">Text<i>&#9662;</i></div>
<div class="t" style="left:403.5px;top:409px;color:#fff;font-size:6.4px;">to</div>
<div class="b" style="left:331px;top:427px;width:86.7px;height:16.5px;background:#266643;border-radius:1.5px;box-shadow:inset 0 1px 0 rgba(255,255,255,.2)"></div>
<div class="t" style="left:335.5px;top:430px;color:#fff;font-size:6.4px;">set</div>
<div class="d" style="left:349px;top:430px;width:20px;height:7.5px;background:#a9c3b5;line-height:7.5px;padding-left:2.5px">ug<i>&#9662;</i></div>
<div class="t" style="left:372px;top:431px;color:#fff;font-size:6.4px;">.</div>
<div class="d" style="left:375px;top:430px;width:24px;height:7.5px;background:#a9c3b5;line-height:7.5px;padding-left:2.5px">Text<i>&#9662;</i></div>
<div class="t" style="left:403.5px;top:430px;color:#fff;font-size:6.4px;">to</div>
<div class="b" style="left:416.7px;top:388px;width:182px;height:17px;background:#3f71b5;border-radius:1.5px;box-shadow:inset 0 1px 0 rgba(255,255,255,.18)"></div>
<div class="d" style="left:420.2px;top:391.5px;width:41.5px;height:8.5px;background:#b4c7e3;line-height:8.5px;padding-left:2.5px">quotient of<i>&#9662;</i></div>
<div class="b" style="left:466.7px;top:390.5px;width:90px;height:12px;background:#439970;border-radius:1.5px;"></div>
<div class="d" style="left:471.2px;top:392.5px;width:21px;height:8px;background:#b4d6c6;line-height:8px;padding-left:2.5px">mg<i>&#9662;</i></div>
<div class="t" style="left:494.2px;top:393.5px;color:#fff;font-size:6.4px;">.</div>
<div class="d" style="left:498.2px;top:392.5px;width:55px;height:8px;background:#b4d6c6;line-height:8px;padding-left:2.5px">ThumbPosition<i>&#9662;</i></div>
<div class="t" style="left:562.2px;top:392px;color:#fff;font-size:7.5px;font-weight:bold">&#247;</div>
<div class="b" style="left:571.2px;top:390px;width:22px;height:12.5px;border:1px solid rgba(255,255,255,.22);border-radius:1.5px"></div>
<div class="n" style="left:573.7px;top:392px;width:17px;height:8px;line-height:8px">100</div>
<div class="b" style="left:416.7px;top:405px;width:265.7px;height:22px;background:#3f71b5;border-radius:1.5px;box-shadow:inset 0 1px 0 rgba(255,255,255,.18)"></div>
<div class="d" style="left:420.2px;top:409.5px;width:41.5px;height:8.5px;background:#b4c7e3;line-height:8.5px;padding-left:2.5px">modulo of<i>&#9662;</i></div>
<div class="b" style="left:466.7px;top:409px;width:178px;height:16.5px;border:1px solid rgba(255,255,255,.28);border-radius:1.5px"></div>
<div class="d" style="left:469.4px;top:411.5px;width:42.3px;height:8.5px;background:#b4c7e3;line-height:8.5px;padding-left:2.5px">quotient of<i>&#9662;</i></div>
<div class="b" style="left:516.2px;top:411px;width:90px;height:11.5px;background:#439970;border-radius:1.5px;"></div>
<div class="d" style="left:520.7px;top:413px;width:21px;height:7.5px;background:#b4d6c6;line-height:7.5px;padding-left:2.5px">mg<i>&#9662;</i></div>
<div class="t" style="left:543.7px;top:413.8px;color:#fff;font-size:6.4px;">.</div>
<div class="d" style="left:547.7px;top:413px;width:55px;height:7.5px;background:#b4d6c6;line-height:7.5px;padding-left:2.5px">ThumbPosition<i>&#9662;</i></div>
<div class="t" style="left:611.7px;top:412.5px;color:#fff;font-size:7.5px;font-weight:bold">&#247;</div>
<div class="b" style="left:620.2px;top:410.5px;width:19px;height:13px;border:1px solid rgba(255,255,255,.22);border-radius:1.5px"></div>
<div class="n" style="left:622.7px;top:413px;width:13.5px;height:9px;line-height:9px">10</div>
<div class="t" style="left:650.2px;top:410px;color:#fff;font-size:7.5px;font-weight:bold">&#247;</div>
<div class="b" style="left:660.2px;top:407.5px;width:18px;height:14px;border:1px solid rgba(255,255,255,.22);border-radius:1.5px"></div>
<div class="n" style="left:662.7px;top:410px;width:12px;height:8.5px;line-height:8.5px">10</div>
<div class="b" style="left:416.7px;top:427px;width:177px;height:16.5px;background:#3f71b5;border-radius:1.5px;box-shadow:inset 0 1px 0 rgba(255,255,255,.18)"></div>
<div class="d" style="left:420.2px;top:430.5px;width:41.5px;height:8.5px;background:#b4c7e3;line-height:8.5px;padding-left:2.5px">modulo of<i>&#9662;</i></div>
<div class="b" style="left:463.7px;top:429.5px;width:90px;height:12px;background:#439970;border-radius:1.5px;"></div>
<div class="d" style="left:468.2px;top:431.5px;width:21px;height:8px;background:#b4d6c6;line-height:8px;padding-left:2.5px">mg<i>&#9662;</i></div>
<div class="t" style="left:491.2px;top:432.5px;color:#fff;font-size:6.4px;">.</div>
<div class="d" style="left:495.2px;top:431.5px;width:55px;height:8px;background:#b4d6c6;line-height:8px;padding-left:2.5px">ThumbPosition<i>&#9662;</i></div>
<div class="t" style="left:559.2px;top:430.8px;color:#fff;font-size:7.5px;font-weight:bold">&#247;</div>
<div class="b" style="left:568.2px;top:429px;width:18px;height:12px;border:1px solid rgba(255,255,255,.22);border-radius:1.5px"></div>
<div class="n" style="left:570.7px;top:431px;width:13px;height:7.5px;line-height:7.5px">10</div>
<div class="b" style="left:331px;top:443px;width:14px;height:6px;background:#b18e35;border-radius:0px;"></div>
<div class="b" style="left:-7px;top:75px;width:31.7px;height:12px;background:#439970;border-radius:1.5px;"></div>
<div class="d" style="left:-5px;top:77px;width:26.5px;height:8px;background:#b4d6c6;line-height:8px;padding-left:6px">ected<i>&#9662;</i></div>
<div class="b" style="left:-4.5px;top:99px;width:13.5px;height:12px;background:#3f71b5;border-radius:1.5px;"></div>
<div class="n" style="left:-1px;top:101.2px;width:7.5px;height:7.6px;line-height:7.6px">1</div>
<div class="b" style="left:-2.3px;top:111px;width:24px;height:11.7px;background:#b32d5e;border-radius:1.5px;"></div>
<div class="t" style="left:2.7px;top:111.9px;color:#fff;font-size:6px;">&quot;</div>
<div class="b" style="left:7.2px;top:114px;width:7px;height:5.7px;background:#e3b0c3;border-radius:1.5px;color:#111;font-size:6px;line-height:5.2px;text-align:center">-</div>
<div class="t" style="left:16.7px;top:111.9px;color:#fff;font-size:6px;">&quot;</div>
<div class="b" style="left:-4.5px;top:129px;width:13.5px;height:12px;background:#3f71b5;border-radius:1.5px;"></div>
<div class="n" style="left:-1px;top:131.2px;width:7.5px;height:7.6px;line-height:7.6px">0</div>
<div class="b" style="left:-4.3px;top:141px;width:24px;height:11.7px;background:#b32d5e;border-radius:1.5px;"></div>
<div class="t" style="left:0.7px;top:141.9px;color:#fff;font-size:6px;">&quot;</div>
<div class="b" style="left:5.2px;top:144px;width:7px;height:5.7px;background:#e3b0c3;border-radius:1.5px;color:#111;font-size:6px;line-height:5.2px;text-align:center">&#215;</div>
<div class="t" style="left:14.7px;top:141.9px;color:#fff;font-size:6px;">&quot;</div>
<div class="b" style="left:-7px;top:159px;width:16px;height:114.5px;background:#7c5385;border-radius:0px;"></div>
<div class="b" style="left:9px;top:170px;width:35px;height:103.5px;background:#b32d5e;border-radius:1.5px;"></div>
<svg class="b" style="left:14px;top:172.5px" width="7.5" height="7.5" viewBox="0 0 13 13"><rect x="0.800" y="0.800" width="11.400" height="11.400" rx="2.500" fill="#3b3fd6" stroke="#b9bdf3" stroke-width="1.200"/><circle cx="6.500" cy="6.500" r="2.600" fill="none" stroke="#fff" stroke-width="1.900"/><path d="M6.500 2V11M2 6.500H11M3.300 3.300L9.700 9.700M9.700 3.300L3.300 9.700" stroke="#fff" stroke-width="1.100"/><circle cx="6.500" cy="6.500" r="1.200" fill="#3b3fd6"/></svg>
<div class="t" style="left:26px;top:172.5px;color:#fff;font-size:6.4px;">join</div>
<div class="b" style="left:44px;top:170px;width:13.5px;height:12px;background:#3f71b5;border-radius:1.5px;"></div>
<div class="n" style="left:47.5px;top:172.2px;width:7.5px;height:7.6px;line-height:7.6px">0</div>
<div class="b" style="left:44px;top:182px;width:13.5px;height:12px;background:#3f71b5;border-radius:1.5px;"></div>
<div class="n" style="left:47.5px;top:184.2px;width:7.5px;height:7.6px;line-height:7.6px">0</div>
<div class="b" style="left:44px;top:194px;width:74.5px;height:11.5px;background:#d05f2d;border-radius:1.5px;"></div>
<div class="t" style="left:49px;top:196px;color:#fff;font-size:6.4px;">get</div>
<div class="d" style="left:61px;top:196px;width:54.5px;height:7.5px;background:#edc2ae;line-height:7.5px;padding-left:2px">global sensmd<i>&#9662;</i></div>
<div class="b" style="left:44px;top:205.5px;width:182px;height:16.5px;background:#3f71b5;border-radius:1.5px;box-shadow:inset 0 1px 0 rgba(255,255,255,.18)"></div>
<div class="d" style="left:47.5px;top:209px;width:41.5px;height:8.5px;background:#b4c7e3;line-height:8.5px;padding-left:2.5px">quotient of<i>&#9662;</i></div>
<div class="b" style="left:94px;top:208px;width:90px;height:12px;background:#439970;border-radius:1.5px;"></div>
<div class="d" style="left:98.5px;top:210px;width:21px;height:8px;background:#b4d6c6;line-height:8px;padding-left:2.5px">md<i>&#9662;</i></div>
<div class="t" style="left:121.5px;top:211px;color:#fff;font-size:6.4px;">.</div>
<div class="d" style="left:125.5px;top:210px;width:55px;height:8px;background:#b4d6c6;line-height:8px;padding-left:2.5px">ThumbPosition<i>&#9662;</i></div>
<div class="t" style="left:189.5px;top:209.2px;color:#fff;font-size:7.5px;font-weight:bold">&#247;</div>
<div class="b" style="left:198.5px;top:207.5px;width:22px;height:12px;border:1px solid rgba(255,255,255,.22);border-radius:1.5px"></div>
<div class="n" style="left:201px;top:209.5px;width:17px;height:7.5px;line-height:7.5px">100</div>
<div class="b" style="left:44px;top:222px;width:265.7px;height:21.5px;background:#3f71b5;border-radius:1.5px;box-shadow:inset 0 1px 0 rgba(255,255,255,.18)"></div>
<div class="d" style="left:47.5px;top:226.5px;width:41.5px;height:8.5px;background:#b4c7e3;line-height:8.5px;padding-left:2.5px">modulo of<i>&#9662;</i></div>
<div class="b" style="left:94px;top:226px;width:178px;height:16px;border:1px solid rgba(255,255,255,.28);border-radius:1.5px"></div>
<div class="d" style="left:96.7px;top:228.5px;width:42.3px;height:8.5px;background:#b4c7e3;line-height:8.5px;padding-left:2.5px">quotient of<i>&#9662;</i></div>
<div class="b" style="left:143.5px;top:228px;width:90px;height:11.5px;background:#439970;border-radius:1.5px;"></div>
<div class="d" style="left:148px;top:230px;width:21px;height:7.5px;background:#b4d6c6;line-height:7.5px;padding-left:2.5px">md<i>&#9662;</i></div>
<div class="t" style="left:171px;top:230.8px;color:#fff;font-size:6.4px;">.</div>
<div class="d" style="left:175px;top:230px;width:55px;height:7.5px;background:#b4d6c6;line-height:7.5px;padding-left:2.5px">ThumbPosition<i>&#9662;</i></div>
<div class="t" style="left:239px;top:229.2px;color:#fff;font-size:7.5px;font-weight:bold">&#247;</div>
<div class="b" style="left:247.5px;top:227.5px;width:19px;height:12.5px;border:1px solid rgba(255,255,255,.22);border-radius:1.5px"></div>
<div class="n" style="left:250px;top:230px;width:13.5px;height:9px;line-height:9px">10</div>
<div class="t" style="left:277.5px;top:226.8px;color:#fff;font-size:7.5px;font-weight:bold">&#247;</div>
<div class="b" style="left:287.5px;top:224.5px;width:18px;height:13.5px;border:1px solid rgba(255,255,255,.22);border-radius:1.5px"></div>
<div class="n" style="left:290px;top:227px;width:12px;height:8.5px;line-height:8.5px">10</div>
<div class="b" style="left:44px;top:243.5px;width:177px;height:17px;background:#3f71b5;border-radius:1.5px;box-shadow:inset 0 1px 0 rgba(255,255,255,.18)"></div>
<div class="d" style="left:47.5px;top:247px;width:41.5px;height:8.5px;background:#b4c7e3;line-height:8.5px;padding-left:2.5px">modulo of<i>&#9662;</i></div>
<div class="b" style="left:91px;top:246px;width:90px;height:12px;background:#439970;border-radius:1.5px;"></div>
<div class="d" style="left:95.5px;top:248px;width:21px;height:8px;background:#b4d6c6;line-height:8px;padding-left:2.5px">md<i>&#9662;</i></div>
<div class="t" style="left:118.5px;top:249px;color:#fff;font-size:6.4px;">.</div>
<div class="d" style="left:122.5px;top:248px;width:55px;height:8px;background:#b4d6c6;line-height:8px;padding-left:2.5px">ThumbPosition<i>&#9662;</i></div>
<div class="t" style="left:186.5px;top:247.5px;color:#fff;font-size:7.5px;font-weight:bold">&#247;</div>
<div class="b" style="left:195.5px;top:245.5px;width:18px;height:12.5px;border:1px solid rgba(255,255,255,.22);border-radius:1.5px"></div>
<div class="n" style="left:198px;top:247.5px;width:13px;height:8px;line-height:8px">10</div>
<div class="b" style="left:44px;top:261px;width:13.5px;height:12.5px;background:#3f71b5;border-radius:1.5px;"></div>
<div class="n" style="left:47.5px;top:263.2px;width:7.5px;height:8.1px;line-height:8.1px">1</div>
<div class="b" style="left:-114px;top:273.5px;width:86.7px;height:17px;background:#266643;border-radius:1.5px;box-shadow:inset 0 1px 0 rgba(255,255,255,.2)"></div>
<div class="t" style="left:-109.5px;top:276.5px;color:#fff;font-size:6.4px;">set</div>
<div class="d" style="left:-96px;top:276.5px;width:20px;height:7.5px;background:#a9c3b5;line-height:7.5px;padding-left:2.5px">cg<i>&#9662;</i></div>
<div class="t" style="left:-73px;top:277.5px;color:#fff;font-size:6.4px;">.</div>
<div class="d" style="left:-70px;top:276.5px;width:24px;height:7.5px;background:#a9c3b5;line-height:7.5px;padding-left:2.5px">Text<i>&#9662;</i></div>
<div class="t" style="left:-41.5px;top:276.5px;color:#fff;font-size:6.4px;">to</div>
<div class="b" style="left:-114px;top:290.5px;width:86.7px;height:22px;background:#266643;border-radius:1.5px;box-shadow:inset 0 1px 0 rgba(255,255,255,.2)"></div>
<div class="t" style="left:-109.5px;top:294.5px;color:#fff;font-size:6.4px;">set</div>
<div class="d" style="left:-96px;top:294.5px;width:20px;height:7.5px;background:#a9c3b5;line-height:7.5px;padding-left:2.5px">dg<i>&#9662;</i></div>
<div class="t" style="left:-73px;top:295.5px;color:#fff;font-size:6.4px;">.</div>
<div class="d" style="left:-70px;top:294.5px;width:24px;height:7.5px;background:#a9c3b5;line-height:7.5px;padding-left:2.5px">Text<i>&#9662;</i></div>
<div class="t" style="left:-41.5px;top:294.5px;color:#fff;font-size:6.4px;">to</div>
<div class="b" style="left:-114px;top:312.5px;width:86.7px;height:16.5px;background:#266643;border-radius:1.5px;box-shadow:inset 0 1px 0 rgba(255,255,255,.2)"></div>
<div class="t" style="left:-109.5px;top:315.5px;color:#fff;font-size:6.4px;">set</div>
<div class="d" style="left:-96px;top:315.5px;width:20px;height:7.5px;background:#a9c3b5;line-height:7.5px;padding-left:2.5px">ug<i>&#9662;</i></div>
<div class="t" style="left:-73px;top:316.5px;color:#fff;font-size:6.4px;">.</div>
<div class="d" style="left:-70px;top:315.5px;width:24px;height:7.5px;background:#a9c3b5;line-height:7.5px;padding-left:2.5px">Text<i>&#9662;</i></div>
<div class="t" style="left:-41.5px;top:315.5px;color:#fff;font-size:6.4px;">to</div>
<div class="b" style="left:-28.3px;top:273.5px;width:182px;height:17px;background:#3f71b5;border-radius:1.5px;box-shadow:inset 0 1px 0 rgba(255,255,255,.18)"></div>
<div class="d" style="left:-24.8px;top:277px;width:41.5px;height:8.5px;background:#b4c7e3;line-height:8.5px;padding-left:2.5px">quotient of<i>&#9662;</i></div>
<div class="b" style="left:21.7px;top:276px;width:90px;height:12px;background:#439970;border-radius:1.5px;"></div>
<div class="d" style="left:26.2px;top:278px;width:21px;height:8px;background:#b4d6c6;line-height:8px;padding-left:2.5px">md<i>&#9662;</i></div>
<div class="t" style="left:49.2px;top:279px;color:#fff;font-size:6.4px;">.</div>
<div class="d" style="left:53.2px;top:278px;width:55px;height:8px;background:#b4d6c6;line-height:8px;padding-left:2.5px">ThumbPosition<i>&#9662;</i></div>
<div class="t" style="left:117.2px;top:277.5px;color:#fff;font-size:7.5px;font-weight:bold">&#247;</div>
<div class="b" style="left:126.2px;top:275.5px;width:22px;height:12.5px;border:1px solid rgba(255,255,255,.22);border-radius:1.5px"></div>
<div class="n" style="left:128.7px;top:277.5px;width:17px;height:8px;line-height:8px">100</div>
<div class="b" style="left:-28.3px;top:290.5px;width:265.7px;height:22px;background:#3f71b5;border-radius:1.5px;box-shadow:inset 0 1px 0 rgba(255,255,255,.18)"></div>
<div class="d" style="left:-24.8px;top:295px;width:41.5px;height:8.5px;background:#b4c7e3;line-height:8.5px;padding-left:2.5px">modulo of<i>&#9662;</i></div>
<div class="b" style="left:21.7px;top:294.5px;width:178px;height:16.5px;border:1px solid rgba(255,255,255,.28);border-radius:1.5px"></div>
<div class="d" style="left:24.4px;top:297px;width:42.3px;height:8.5px;background:#b4c7e3;line-height:8.5px;padding-left:2.5px">quotient of<i>&#9662;</i></div>
<div class="b" style="left:71.2px;top:296.5px;width:90px;height:11.5px;background:#439970;border-radius:1.5px;"></div>
<div class="d" style="left:75.7px;top:298.5px;width:21px;height:7.5px;background:#b4d6c6;line-height:7.5px;padding-left:2.5px">md<i>&#9662;</i></div>
<div class="t" style="left:98.7px;top:299.2px;color:#fff;font-size:6.4px;">.</div>
<div class="d" style="left:102.7px;top:298.5px;width:55px;height:7.5px;background:#b4d6c6;line-height:7.5px;padding-left:2.5px">ThumbPosition<i>&#9662;</i></div>
<div class="t" style="left:166.7px;top:298px;color:#fff;font-size:7.5px;font-weight:bold">&#247;</div>
<div class="b" style="left:175.2px;top:296px;width:19px;height:13px;border:1px solid rgba(255,255,255,.22);border-radius:1.5px"></div>
<div class="n" style="left:177.7px;top:298.5px;width:13.5px;height:9px;line-height:9px">10</div>
<div class="t" style="left:205.2px;top:295.5px;color:#fff;font-size:7.5px;font-weight:bold">&#247;</div>
<div class="b" style="left:215.2px;top:293px;width:18px;height:14px;border:1px solid rgba(255,255,255,.22);border-radius:1.5px"></div>
<div class="n" style="left:217.7px;top:295.5px;width:12px;height:8.5px;line-height:8.5px">10</div>
<div class="b" style="left:-28.3px;top:312.5px;width:177px;height:16.5px;background:#3f71b5;border-radius:1.5px;box-shadow:inset 0 1px 0 rgba(255,255,255,.18)"></div>
<div class="d" style="left:-24.8px;top:316px;width:41.5px;height:8.5px;background:#b4c7e3;line-height:8.5px;padding-left:2.5px">modulo of<i>&#9662;</i></div>
<div class="b" style="left:18.7px;top:315px;width:90px;height:12px;background:#439970;border-radius:1.5px;"></div>
<div class="d" style="left:23.2px;top:317px;width:21px;height:8px;background:#b4d6c6;line-height:8px;padding-left:2.5px">md<i>&#9662;</i></div>
<div class="t" style="left:46.2px;top:318px;color:#fff;font-size:6.4px;">.</div>
<div class="d" style="left:50.2px;top:317px;width:55px;height:8px;background:#b4d6c6;line-height:8px;padding-left:2.5px">ThumbPosition<i>&#9662;</i></div>
<div class="t" style="left:114.2px;top:316.2px;color:#fff;font-size:7.5px;font-weight:bold">&#247;</div>
<div class="b" style="left:123.2px;top:314.5px;width:18px;height:12px;border:1px solid rgba(255,255,255,.22);border-radius:1.5px"></div>
<div class="n" style="left:125.7px;top:316.5px;width:13px;height:7.5px;line-height:7.5px">10</div>
<div class="b" style="left:-7px;top:335px;width:53px;height:16.7px;background:#3f71b5;border-radius:1.5px;"></div>
<div class="b" style="left:-7px;top:338.5px;width:10px;height:10.5px;background:#d05f2d;border-radius:1.5px;"></div>
<div class="d" style="left:6.7px;top:339.5px;width:15.8px;height:8.5px;background:#b4c7e3;line-height:8.5px;padding-left:3px">=<i>&#9662;</i></div>
<div class="b" style="left:27.5px;top:337.5px;width:16px;height:12px;border:1px solid rgba(255,255,255,.22);border-radius:1.5px"></div>
<div class="n" style="left:30.5px;top:339.5px;width:10px;height:8.5px;line-height:8.5px">0</div>
<div class="b" style="left:-4.3px;top:352px;width:24px;height:12px;background:#b32d5e;border-radius:1.5px;"></div>
<div class="t" style="left:0.7px;top:353px;color:#fff;font-size:6px;">&quot;</div>
<div class="b" style="left:5.2px;top:355px;width:7px;height:6px;background:#e3b0c3;border-radius:1.5px;color:#111;font-size:6px;line-height:5.5px;text-align:center">&#215;</div>
<div class="t" style="left:14.7px;top:353px;color:#fff;font-size:6px;">&quot;</div>
<div class="b" style="left:-2.3px;top:370.5px;width:24px;height:11.5px;background:#b32d5e;border-radius:1.5px;"></div>
<div class="t" style="left:2.7px;top:371.2px;color:#fff;font-size:6px;">&quot;</div>
<div class="b" style="left:7.2px;top:373.5px;width:7px;height:5.5px;background:#e3b0c3;border-radius:1.5px;color:#111;font-size:6px;line-height:5px;text-align:center">-</div>
<div class="t" style="left:16.7px;top:371.2px;color:#fff;font-size:6px;">&quot;</div>
<div class="b" style="left:-114px;top:388px;width:86.7px;height:17px;background:#266643;border-radius:1.5px;box-shadow:inset 0 1px 0 rgba(255,255,255,.2)"></div>
<div class="t" style="left:-109.5px;top:391px;color:#fff;font-size:6.4px;">set</div>
<div class="d" style="left:-96px;top:391px;width:20px;height:7.5px;background:#a9c3b5;line-height:7.5px;padding-left:2.5px">cg<i>&#9662;</i></div>
<div class="t" style="left:-73px;top:392px;color:#fff;font-size:6.4px;">.</div>
<div class="d" style="left:-70px;top:391px;width:24px;height:7.5px;background:#a9c3b5;line-height:7.5px;padding-left:2.5px">Text<i>&#9662;</i></div>
<div class="t" style="left:-41.5px;top:391px;color:#fff;font-size:6.4px;">to</div>
<div class="b" style="left:-114px;top:405px;width:86.7px;height:22px;background:#266643;border-radius:1.5px;box-shadow:inset 0 1px 0 rgba(255,255,255,.2)"></div>
<div class="t" style="left:-109.5px;top:409px;color:#fff;font-size:6.4px;">set</div>
<div class="d" style="left:-96px;top:409px;width:20px;height:7.5px;background:#a9c3b5;line-height:7.5px;padding-left:2.5px">dg<i>&#9662;</i></div>
<div class="t" style="left:-73px;top:410px;color:#fff;font-size:6.4px;">.</div>
<div class="d" style="left:-70px;top:409px;width:24px;height:7.5px;background:#a9c3b5;line-height:7.5px;padding-left:2.5px">Text<i>&#9662;</i></div>
<div class="t" style="left:-41.5px;top:409px;color:#fff;font-size:6.4px;">to</div>
<div class="b" style="left:-114px;top:427px;width:86.7px;height:16.5px;background:#266643;border-radius:1.5px;box-shadow:inset 0 1px 0 rgba(255,255,255,.2)"></div>
<div class="t" style="left:-109.5px;top:430px;color:#fff;font-size:6.4px;">set</div>
<div class="d" style="left:-96px;top:430px;width:20px;height:7.5px;background:#a9c3b5;line-height:7.5px;padding-left:2.5px">ug<i>&#9662;</i></div>
<div class="t" style="left:-73px;top:431px;color:#fff;font-size:6.4px;">.</div>
<div class="d" style="left:-70px;top:430px;width:24px;height:7.5px;background:#a9c3b5;line-height:7.5px;padding-left:2.5px">Text<i>&#9662;</i></div>
<div class="t" style="left:-41.5px;top:430px;color:#fff;font-size:6.4px;">to</div>
<div class="b" style="left:-28.3px;top:388px;width:182px;height:17px;background:#3f71b5;border-radius:1.5px;box-shadow:inset 0 1px 0 rgba(255,255,255,.18)"></div>
<div class="d" style="left:-24.8px;top:391.5px;width:41.5px;height:8.5px;background:#b4c7e3;line-height:8.5px;padding-left:2.5px">quotient of<i>&#9662;</i></div>
<div class="b" style="left:21.7px;top:390.5px;width:90px;height:12px;background:#439970;border-radius:1.5px;"></div>
<div class="d" style="left:26.2px;top:392.5px;width:21px;height:8px;background:#b4d6c6;line-height:8px;padding-left:2.5px">md<i>&#9662;</i></div>
<div class="t" style="left:49.2px;top:393.5px;color:#fff;font-size:6.4px;">.</div>
<div class="d" style="left:53.2px;top:392.5px;width:55px;height:8px;background:#b4d6c6;line-height:8px;padding-left:2.5px">ThumbPosition<i>&#9662;</i></div>
<div class="t" style="left:117.2px;top:392px;color:#fff;font-size:7.5px;font-weight:bold">&#247;</div>
<div class="b" style="left:126.2px;top:390px;width:22px;height:12.5px;border:1px solid rgba(255,255,255,.22);border-radius:1.5px"></div>
<div class="n" style="left:128.7px;top:392px;width:17px;height:8px;line-height:8px">100</div>
<div class="b" style="left:-28.3px;top:405px;width:265.7px;height:22px;background:#3f71b5;border-radius:1.5px;box-shadow:inset 0 1px 0 rgba(255,255,255,.18)"></div>
<div class="d" style="left:-24.8px;top:409.5px;width:41.5px;height:8.5px;background:#b4c7e3;line-height:8.5px;padding-left:2.5px">modulo of<i>&#9662;</i></div>
<div class="b" style="left:21.7px;top:409px;width:178px;height:16.5px;border:1px solid rgba(255,255,255,.28);border-radius:1.5px"></div>
<div class="d" style="left:24.4px;top:411.5px;width:42.3px;height:8.5px;background:#b4c7e3;line-height:8.5px;padding-left:2.5px">quotient of<i>&#9662;</i></div>
<div class="b" style="left:71.2px;top:411px;width:90px;height:11.5px;background:#439970;border-radius:1.5px;"></div>
<div class="d" style="left:75.7px;top:413px;width:21px;height:7.5px;background:#b4d6c6;line-height:7.5px;padding-left:2.5px">md<i>&#9662;</i></div>
<div class="t" style="left:98.7px;top:413.8px;color:#fff;font-size:6.4px;">.</div>
<div class="d" style="left:102.7px;top:413px;width:55px;height:7.5px;background:#b4d6c6;line-height:7.5px;padding-left:2.5px">ThumbPosition<i>&#9662;</i></div>
<div class="t" style="left:166.7px;top:412.5px;color:#fff;font-size:7.5px;font-weight:bold">&#247;</div>
<div class="b" style="left:175.2px;top:410.5px;width:19px;height:13px;border:1px solid rgba(255,255,255,.22);border-radius:1.5px"></div>
<div class="n" style="left:177.7px;top:413px;width:13.5px;height:9px;line-height:9px">10</div>
<div class="t" style="left:205.2px;top:410px;color:#fff;font-size:7.5px;font-weight:bold">&#247;</div>
<div class="b" style="left:215.2px;top:407.5px;width:18px;height:14px;border:1px solid rgba(255,255,255,.22);border-radius:1.5px"></div>
<div class="n" style="left:217.7px;top:410px;width:12px;height:8.5px;line-height:8.5px">10</div>
<div class="b" style="left:-28.3px;top:427px;width:177px;height:16.5px;background:#3f71b5;border-radius:1.5px;box-shadow:inset 0 1px 0 rgba(255,255,255,.18)"></div>
<div class="d" style="left:-24.8px;top:430.5px;width:41.5px;height:8.5px;background:#b4c7e3;line-height:8.5px;padding-left:2.5px">modulo of<i>&#9662;</i></div>
<div class="b" style="left:18.7px;top:429.5px;width:90px;height:12px;background:#439970;border-radius:1.5px;"></div>
<div class="d" style="left:23.2px;top:431.5px;width:21px;height:8px;background:#b4d6c6;line-height:8px;padding-left:2.5px">md<i>&#9662;</i></div>
<div class="t" style="left:46.2px;top:432.5px;color:#fff;font-size:6.4px;">.</div>
<div class="d" style="left:50.2px;top:431.5px;width:55px;height:8px;background:#b4d6c6;line-height:8px;padding-left:2.5px">ThumbPosition<i>&#9662;</i></div>
<div class="t" style="left:114.2px;top:430.8px;color:#fff;font-size:7.5px;font-weight:bold">&#247;</div>
<div class="b" style="left:123.2px;top:429px;width:18px;height:12px;border:1px solid rgba(255,255,255,.22);border-radius:1.5px"></div>
<div class="n" style="left:125.7px;top:431px;width:13px;height:7.5px;line-height:7.5px">10</div>
<!-- workspace scrollbars -->
<div class="b" style="left:318px;top:459px;width:266px;height:10px;background:#c8c8c8;border-radius:5px"></div>
<div class="b" style="left:724px;top:94px;width:10px;height:247px;background:#c8c8c8;border-radius:5px"></div>
<!-- backpack -->
<svg class="b" style="left:623px;top:6px" width="100" height="95" viewBox="0 0 789 750">
 <g stroke="#0c2d27" stroke-width="21" stroke-linejoin="round" stroke-linecap="round">
  <path d="M338 108A54 48 0 0 1 446 108" fill="none" stroke-width="30"/>
  <path d="M250 150L395 100L560 150L690 205L660 420L130 410Z" fill="#2a9c88"/>
  <path d="M672 208C700 260 718 400 722 572L668 600L652 545C668 540 672 430 640 335Z" fill="#0f3a32"/>
  <path d="M652 345C664 400 668 470 664 530L656 536C658 470 655 410 645 362Z" fill="#fff" stroke="none"/>
  <path d="M60 232L100 215L92 185L180 148L198 180L250 165L258 402L140 402Z" fill="#d9622b"/>
  <path d="M268 155L322 148L308 115L395 108L390 150L440 150L450 402L270 402Z" fill="#47a0d6"/>
  <path d="M510 150L562 168L545 200L610 222L628 190L682 207L590 425L465 402Z" fill="#7c5385"/>
  <path d="M135 412L560 420C620 430 645 460 645 520L645 628C560 665 420 672 300 662C160 648 75 600 70 520C68 460 95 425 135 412Z" fill="#4bb8a8"/>
  <path d="M135 415C85 450 70 520 110 570C160 625 280 640 380 600C460 565 530 500 580 440" fill="none" stroke-width="19"/>
  <path d="M165 428C118 458 108 515 138 552C182 602 282 606 368 572C440 542 508 490 558 440" fill="none" stroke-width="15"/>
  <path d="M420 592L500 586L520 502" fill="none" stroke-width="17"/>
  <path d="M602 445C618 500 614 600 600 640" fill="none" stroke-width="14"/>
 </g>
</svg>
<!-- zoom controls -->
<svg class="b" style="left:672px;top:250px" width="32" height="32" viewBox="0 0 32 32"><circle cx="16" cy="16" r="10.500" fill="none" stroke="#111" stroke-width="1.600"/><circle cx="16" cy="16" r="3.600" fill="#111"/><path d="M16 1.500V6.500M16 25.500V30.500M1.500 16H6.500M25.500 16H30.500" stroke="#111" stroke-width="1.600"/></svg>
<svg class="b" style="left:671px;top:293px" width="32" height="32" viewBox="0 0 32 32"><circle cx="16" cy="16" r="14.300" fill="none" stroke="#111" stroke-width="1.900"/><path d="M16 9V23M9 16H23" stroke="#111" stroke-width="1.800"/></svg>
<svg class="b" style="left:671px;top:326px" width="32" height="32" viewBox="0 0 32 32"><circle cx="16" cy="16" r="14.300" fill="none" stroke="#111" stroke-width="1.900"/><path d="M9 16H23" stroke="#111" stroke-width="1.800"/></svg>
<!-- warning indicators -->
<svg class="b" style="left:33px;top:367px" width="22" height="13" viewBox="0 0 22 13"><path d="M11 1.200L20.300 11.500H1.700Z" fill="#fff" stroke="#111" stroke-width="1.100"/></svg>
<svg class="b" style="left:98px;top:367px" width="22" height="13" viewBox="0 0 22 13"><path d="M11 1.200L20.300 11.500H1.700Z" fill="#fff" stroke="#111" stroke-width="1.100"/></svg>
<svg class="b" style="left:33px;top:404px" width="22" height="12" viewBox="0 0 22 12"><path d="M1.700 1.200H20.300L11 10.800Z" fill="#fff" stroke="#111" stroke-width="1.100"/></svg>
<svg class="b" style="left:98px;top:404px" width="22" height="12" viewBox="0 0 22 12"><path d="M1.700 1.200H20.300L11 10.800Z" fill="#fff" stroke="#111" stroke-width="1.100"/></svg>
<svg class="b" style="left:34px;top:383px" width="16" height="16" viewBox="0 0 16 16"><path d="M8 1.300L15 14.500H1Z" fill="#efe96a" stroke="#cfc74a" stroke-width="1" stroke-linejoin="round"/><rect x="7.200" y="5.500" width="1.600" height="5" fill="#6b6a3a"/><rect x="7.200" y="11.500" width="1.600" height="1.600" fill="#6b6a3a"/></svg>
<div class="b" style="left:53px;top:385px;font-size:13px;color:#111;line-height:15px">0</div>
<svg class="b" style="left:97px;top:383px" width="17" height="17" viewBox="0 0 17 17"><circle cx="8.500" cy="8.500" r="7.800" fill="#e0383e" stroke="#b32228" stroke-width="0.800"/><path d="M5 5L12 12M12 5L5 12" stroke="#fff" stroke-width="2.200" stroke-linecap="round"/></svg>
<div class="b" style="left:116px;top:385px;font-size:13px;color:#111;line-height:15px">0</div>
<div class="b" style="left:19px;top:418.500px;width:117px;height:18.500px;background:#efefef;border:1px solid #555;border-radius:1.500px;box-shadow:1px 1px 1px rgba(0,0,0,.35);font-size:13px;color:#111;text-align:center;line-height:16.500px;white-space:nowrap;-webkit-text-stroke:0.200px #111">Show Warnings</div>

<!--WS-END-->
</div>

<!-- ===== PAGE SCROLLBARS ===== -->
<div class="a" style="left:0;top:694px;width:999px;height:17px;background:#f1f1f1"></div>
<div class="a" style="left:26px;top:695px;width:940px;height:15px;background:#c8c8c8"></div>
<svg class="a" style="left:5px;top:698px" width="6" height="9" viewBox="0 0 6 9"><path d="M5 1L1.500 4.500L5 8" fill="none" stroke="#404040" stroke-width="1.600"/></svg>
<svg class="a" style="left:972px;top:698px" width="6" height="9" viewBox="0 0 6 9"><path d="M1 1L4.500 4.500L1 8" fill="none" stroke="#404040" stroke-width="1.600"/></svg>
<div class="a" style="left:983px;top:71px;width:16px;height:624px;background:#f1f1f1"></div>
<div class="a" style="left:984px;top:89px;width:14px;height:477px;background:#c6c6c6"></div>
<svg class="a" style="left:986px;top:78px" width="10" height="7" viewBox="0 0 10 7"><path d="M1 6L5 2L9 6" fill="none" stroke="#303030" stroke-width="1.800"/></svg>
<svg class="a" style="left:986px;top:684px" width="10" height="7" viewBox="0 0 10 7"><path d="M1 1L5 5L9 1" fill="none" stroke="#303030" stroke-width="1.800"/></svg>

<!-- ===== TASKBAR ===== -->
<div id="task" class="a">
  <!-- start -->
  <svg class="a" style="left:14px;top:12px" width="17" height="17" viewBox="0 0 17 17"><path d="M0 2.300L7 1.300V8H0ZM8 1.150L17 0V8H8ZM0 9H7V15.700L0 14.700ZM8 9H17V17L8 15.850Z" fill="#f3f6f8"/></svg>
  <div class="a" style="left:46px;top:2px;width:313px;height:37px;background:#f2f2f2"></div>
  <svg class="a" style="left:57px;top:12px" width="18" height="18" viewBox="0 0 18 18"><circle cx="11" cy="7" r="5.300" fill="none" stroke="#222" stroke-width="1.500"/><path d="M7.200 10.800L1.200 16.800" stroke="#222" stroke-width="1.600"/></svg>
  <div class="a" style="left:85px;top:12px;font-size:14.400px;color:#202020;white-space:nowrap;line-height:17px">Taper ici pour rechercher</div>
  <!-- cortana -->
  <div class="a" style="left:374px;top:13px;width:15px;height:15px;border:2.200px solid #fff;border-radius:50%"></div>
  <!-- task view -->
  <svg class="a" style="left:420px;top:13px" width="18" height="15" viewBox="0 0 18 15"><rect x="3" y="4" width="9" height="7" fill="none" stroke="#fff" stroke-width="1.300"/><path d="M1 1.200H13M1 13.800H13" stroke="#fff" stroke-width="1.300"/><rect x="14.500" y="0.500" width="2" height="2" fill="#fff"/><rect x="14.500" y="5" width="2" height="5" fill="#fff"/><rect x="14.500" y="12.500" width="2" height="2" fill="#fff"/></svg>
  <!-- edge -->
  <svg class="a" style="left:464px;top:10px" width="22" height="22" viewBox="0 0 22 22"><path d="M1 10C2 4 6.500 0.800 11.500 0.800C17.500 0.800 21 5 21 10.500V13H7.500C7.800 16 10.500 17.500 13.500 17.500C16 17.500 18.200 16.800 20 15.700V20C18 21 15.500 21.500 13 21.500C7 21.500 3 18 3 12.500C3 9 5 6.200 8 4.800C5 5.500 2.500 7.500 1 10ZM7.600 9H15.200C15.200 6.500 13.800 5 11.500 5C9.300 5 7.900 6.700 7.600 9Z" fill="#0a7fe0"/></svg>
  <!-- explorer -->
  <svg class="a" style="left:505px;top:11px" width="22" height="19" viewBox="0 0 22 19"><path d="M0.500 1.500H8L10 3.500H21.500V17H0.500Z" fill="#e9b531"/><path d="M0.500 5H21.500V17.500H0.500Z" fill="#fbd45e"/><rect x="6" y="10" width="10" height="7.500" fill="#3f9be0"/><rect x="8" y="13.500" width="6" height="4" fill="#fbd45e"/></svg>
  <div class="a" style="left:500px;top:38px;width:32px;height:2px;background:#7fbcee"></div>
  <!-- store -->
  <svg class="a" style="left:545px;top:8px" width="23" height="24" viewBox="0 0 23 24"><path d="M7.500 7V5.500a4 4 0 0 1 8 0V7" fill="none" stroke="#f2f2f2" stroke-width="1.400"/><path d="M0.500 7H22.500V20.500A2.500 2.500 0 0 1 20 23H3A2.500 2.500 0 0 1 0.500 20.500Z" fill="#f7f7f7"/><rect x="6.500" y="10" width="4.300" height="4.300" fill="#f25022"/><rect x="12" y="10" width="4.300" height="4.300" fill="#7fba00"/><rect x="6.500" y="15.500" width="4.300" height="4.300" fill="#00a4ef"/><rect x="12" y="15.500" width="4.300" height="4.300" fill="#ffb900"/></svg>
  <div class="a" style="left:541px;top:38px;width:32px;height:2px;background:#7fbcee"></div>
  <!-- mail -->
  <svg class="a" style="left:586px;top:10px" width="24" height="21" viewBox="0 0 24 21"><path d="M0.500 7L12 0.500L23.500 7V20.500H0.500Z" fill="#1e8fe6"/><path d="M2.500 7.500H21.500L12 14Z" fill="#fff"/><path d="M0.500 8L12 16L23.500 8V20.500H0.500Z" fill="#3aa6f2"/></svg>
  <div class="a" style="left:602px;top:18px;width:16px;height:16px;border-radius:50%;background:#2b2f36;border:1.300px solid #d0d0d0;color:#fff;font-size:11px;line-height:13.500px;text-align:center">7</div>
  <!-- office -->
  <svg class="a" style="left:630px;top:9px" width="18" height="22" viewBox="0 0 18 22"><path d="M0.500 5.500L11.500 0.500L17.500 2.500V19.500L11.500 21.500L0.500 17L11.500 18.300V4.300L4.500 6.200V15.300L0.500 17Z" fill="#e8421d"/></svg>
  <!-- firefox active -->
  <div class="a" style="left:660px;top:0;width:40px;height:40px;background:#425261"></div>
  <div class="a" style="left:660px;top:38px;width:40px;height:2px;background:#7fbcee"></div>
  <svg class="a" style="left:667px;top:8px" width="25" height="25" viewBox="0 0 25 25"><defs><radialGradient id="ffg" cx="0.650" cy="0.200" r="0.900"><stop offset="0" stop-color="#ffe226"/><stop offset="0.450" stop-color="#ff8a16"/><stop offset="0.800" stop-color="#ff3647"/><stop offset="1" stop-color="#c60084"/></radialGradient></defs><path d="M12.500 2C14 4 15 4.500 16 4C15.500 2.500 16 1 17 0.500C18 3 22 5 23 10C24 17 19 23.500 12 23.500C5.500 23.500 1.500 18.500 1.500 13.500C1.500 9.500 3 7 4.500 5C4.500 6.500 5 7.500 5.500 8C6.500 5.500 9.500 3.500 12.500 2Z" fill="url(#ffg)"/><circle cx="12" cy="13.500" r="5.200" fill="#7542e5"/><path d="M7 11C9 9 13 9.500 14.500 11.500C12.500 11 11 12 11.500 13.500C12 15 15 15 16.500 13C17 17 13 19.500 10 18C7.500 16.500 6.500 13.500 7 11Z" fill="#ff9a1e"/></svg>
  <!-- ubuntu -->
  <div class="a" style="left:712px;top:11.500px;width:18px;height:18px;border-radius:50%;background:#fff"></div>
  <svg class="a" style="left:712px;top:11.500px" width="18" height="18" viewBox="0 0 23 23"><circle cx="11.500" cy="11.500" r="5" fill="none" stroke="#dd4814" stroke-width="2.200"/><circle cx="4.800" cy="11.500" r="1.900" fill="#dd4814" stroke="#fff" stroke-width="0.800"/><circle cx="14.900" cy="5.700" r="1.900" fill="#dd4814" stroke="#fff" stroke-width="0.800"/><circle cx="14.900" cy="17.300" r="1.900" fill="#dd4814" stroke="#fff" stroke-width="0.800"/></svg>
  <div class="a" style="left:705px;top:38px;width:32px;height:2px;background:#7fbcee"></div>
  <!-- onedrive tile -->
  <div class="a" style="left:742px;top:0;width:40px;height:40px;background:#a4622f"></div>
  <div class="a" style="left:742px;top:37px;width:40px;height:3px;background:#f27f22"></div>
  <svg class="a" style="left:749px;top:13px" width="26" height="16" viewBox="0 0 26 16"><path d="M6 15.500A4.500 4.500 0 0 1 5.500 6.600A6 6 0 0 1 16.800 4.800A5 5 0 0 1 22 8.500A3.600 3.600 0 0 1 21.500 15.500Z" fill="#fff"/></svg>
  <!-- tray -->
  <svg class="a" style="left:791px;top:15px" width="12" height="8" viewBox="0 0 12 8"><path d="M1 7L6 1.500L11 7" fill="none" stroke="#fff" stroke-width="1.400"/></svg>
  <svg class="a" style="left:812px;top:15px" width="17" height="11" viewBox="0 0 17 11"><path d="M4 10.500A3 3 0 0 1 3.600 4.600A4 4 0 0 1 11 3.400A3.300 3.300 0 0 1 14.500 5.800A2.400 2.400 0 0 1 14 10.500Z" fill="#d9dde2"/></svg>
  <svg class="a" style="left:838px;top:13px" width="16" height="15" viewBox="0 0 16 15"><path d="M1.500 14A12.500 12.500 0 0 1 14.500 1.500" fill="none" stroke="#fff" stroke-width="1.200"/><path d="M5 14A9 9 0 0 1 14.500 5" fill="none" stroke="#fff" stroke-width="1.200"/><path d="M8.500 14A5.500 5.500 0 0 1 14.500 8.500" fill="none" stroke="#fff" stroke-width="1.200"/><circle cx="13.300" cy="13" r="1.500" fill="#fff"/></svg>
  <svg class="a" style="left:859px;top:12px" width="18" height="16" viewBox="0 0 18 16"><path d="M1 5.500H4L8 2V14L4 10.500H1Z" fill="none" stroke="#fff" stroke-width="1.200" stroke-linejoin="round"/><path d="M10.500 5.500A3.500 3.500 0 0 1 10.500 10.500M12.500 3.500A6 6 0 0 1 12.500 12.500M14.500 1.500A8.500 8.500 0 0 1 14.500 14.500" fill="none" stroke="#fff" stroke-width="1.100"/></svg>
  <div class="a" style="left:884px;top:4px;width:58px;text-align:center;font-size:12.200px;color:#fff;line-height:14px;letter-spacing:-0.450px">12:34</div>
  <div class="a" style="left:882px;top:21px;width:62px;text-align:center;font-size:12.200px;color:#fff;line-height:14px;letter-spacing:-0.550px;white-space:nowrap">12/04/2020</div>
  <svg class="a" style="left:958px;top:9px" width="17" height="16" viewBox="0 0 17 16"><path d="M0.500 0.500H16.500V11.500H5.500L2.500 14.500V11.500H0.500Z" fill="#fff"/><path d="M3 3.500H14M3 6H14M3 8.500H11" stroke="#1d2a44" stroke-width="1"/></svg>
  <div class="a" style="left:967px;top:18px;width:16px;height:16px;border-radius:50%;background:#1f2228;border:1.300px solid #bdbdbd;color:#fff;font-size:11px;line-height:13.500px;text-align:center">1</div>
  <div class="a" style="left:994px;top:0;width:1px;height:40px;background:#7d8597"></div>
  <div class="a" style="left:0;top:0;width:999px;height:1px;background:#f3f3f3"></div>
</div>

</div>
</body></html>
